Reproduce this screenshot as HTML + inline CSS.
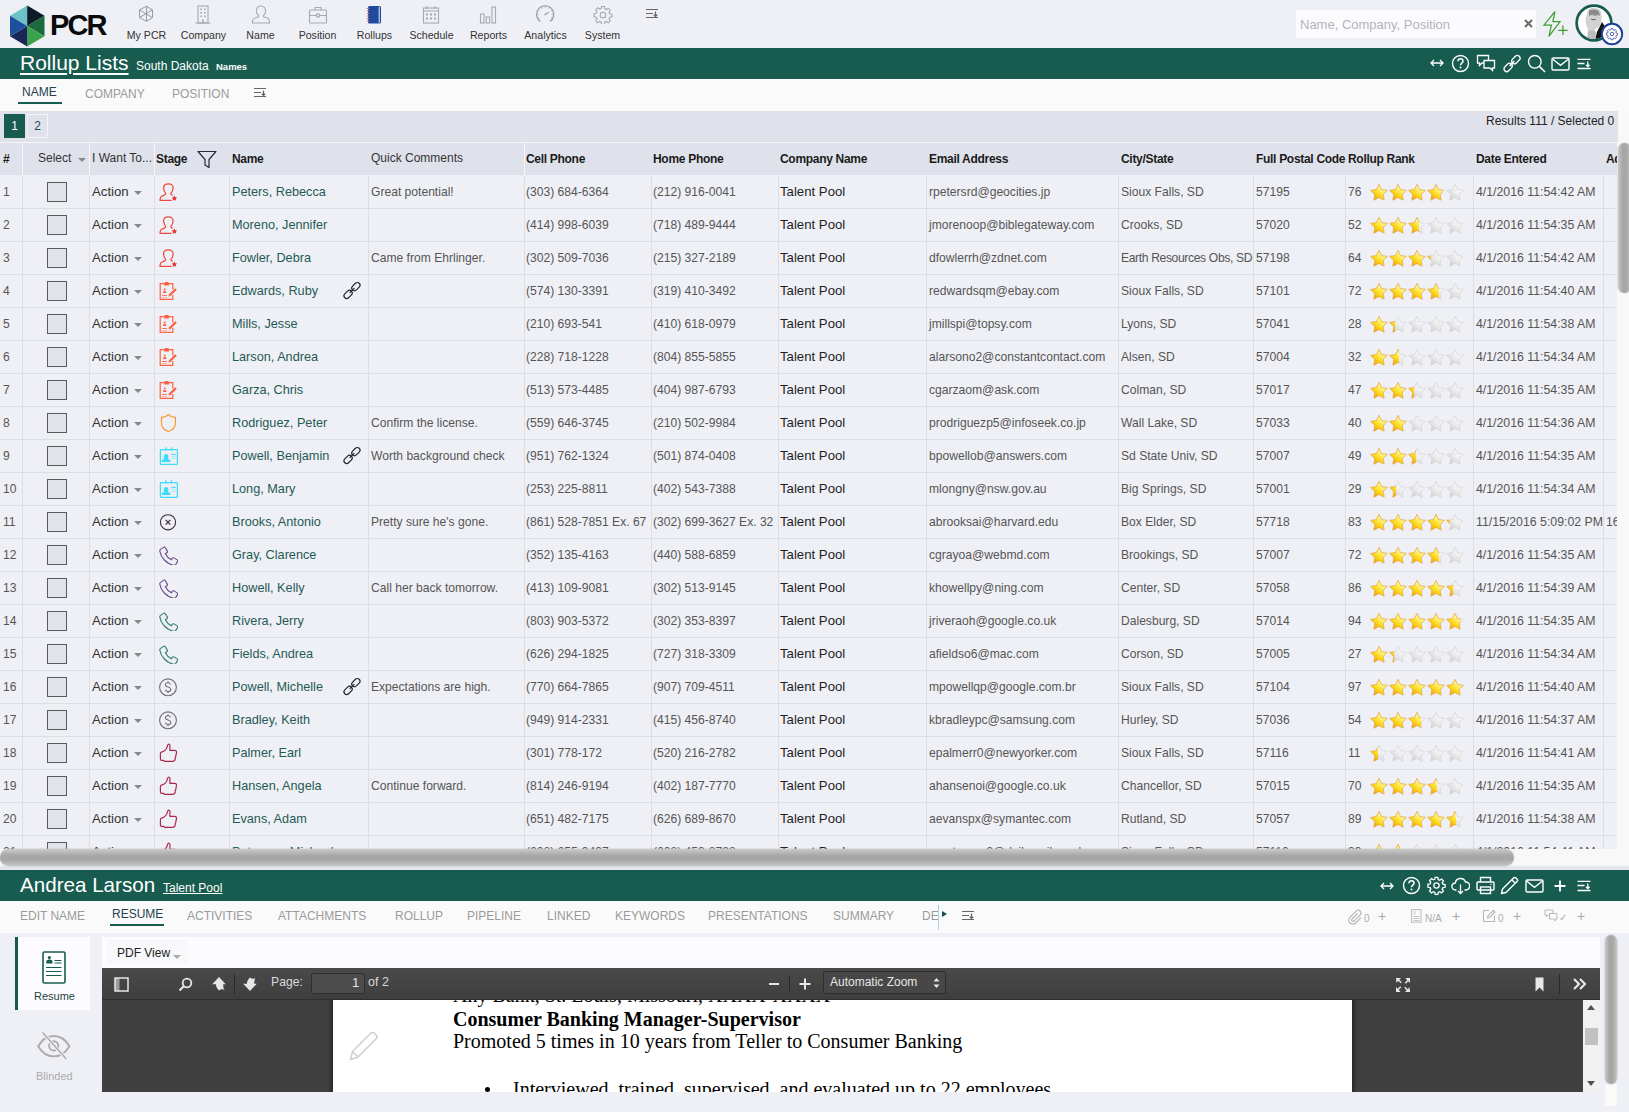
<!DOCTYPE html>
<html><head><meta charset="utf-8"><title>Rollup Lists</title>
<style>
*{box-sizing:border-box}
html,body{margin:0;padding:0}
body{width:1629px;height:1112px;overflow:hidden;position:relative;background:#eff0f5;font-family:"Liberation Sans",sans-serif;color:#333}
.abs{position:absolute}
svg{display:block}
#topnav{left:0;top:0;width:1629px;height:48px;background:#eff0f5}
.nav{position:absolute;top:0;width:57px;height:48px;text-align:center}
.nav span{position:absolute;left:-10px;right:-10px;top:29px;font-size:10.6px;color:#333;text-align:center}
#hdr1{left:0;top:48px;width:1629px;height:31px;background:#185c4f}
#tabs1{left:0;top:79px;width:1629px;height:32px;background:#fafafa}
.tab{position:absolute;font-size:12px;color:#9a9a9a;white-space:nowrap}
.tab.act{color:#1e4250}
#pager{left:0;top:111px;width:1618px;height:31px;background:#e0e2eb}
#grid{left:0;top:142px;width:1617px;height:707px;overflow:hidden;background:#eff0f5}
.hrow{position:absolute;left:0;top:1px;width:1617px;height:32px;background:#e0e2eb}
.hl{position:absolute;top:0;width:1px;height:32px;background:#f7f7fa}
.hc{position:absolute;top:9px;font-size:12px;font-weight:bold;color:#1b1b1b;white-space:nowrap;letter-spacing:-.3px}
.row{position:absolute;left:0;width:1617px;height:33px;border-bottom:1px solid #dcdee6}
.vl{position:absolute;top:34px;width:1px;height:673px;background:#dcdee6}
.c{position:absolute;top:9px;font-size:12.1px;color:#555;white-space:nowrap}
.c.nm{color:#1f5a55;font-size:12.7px;top:9px}
.c.tp{color:#1e1e1e;font-size:13.2px;top:8px}
.cb{position:absolute;left:47px;top:6px;width:20px;height:20px;border:1.5px solid #5a5a5a;background:#e1e3eb}
.act-dd{position:absolute;left:92px;top:8px;font-size:13.2px;color:#333}
.tri{position:absolute;width:0;height:0;border-left:4px solid transparent;border-right:4px solid transparent;border-top:4px solid #888}
.stg{position:absolute;left:158px;top:6px}
.lnk{position:absolute;left:342px;top:6px}
.stars{position:absolute;left:1370px;top:7px}
#hscroll{left:0;top:849px;width:1629px;height:21px;background:#eceef3}
#hdr2{left:0;top:870px;width:1629px;height:31px;background:#185c4f}
#tabs2{left:0;top:901px;width:1629px;height:32px;background:#fafafa}
#content{left:0;top:933px;width:1629px;height:179px;background:#eff0f5}
</style></head><body>
<svg width="0" height="0" style="position:absolute"><defs>
<linearGradient id="gF" x1="0.9" y1="0.2" x2="0.3" y2="1"><stop offset="0" stop-color="#fff8b8"/><stop offset=".28" stop-color="#fff27a"/><stop offset=".62" stop-color="#fbd816"/><stop offset="1" stop-color="#f4a010"/></linearGradient>
<linearGradient id="gE" x1="1" y1="0.1" x2="0.2" y2="1"><stop offset="0" stop-color="#fdfdfd"/><stop offset=".5" stop-color="#eeeeee"/><stop offset="1" stop-color="#cdcdcd"/></linearGradient>
</defs></svg>

<div id="topnav" class="abs">
<svg class="abs" style="left:9px;top:4.5px" width="38" height="42" viewBox="0 0 38 42">
<polygon points="18.2,21 1,10.8 18.2,0.5" fill="#6cc3c6"/>
<polygon points="18.2,21 18.2,0.5 35.5,10.8" fill="#0c1b27"/>
<polygon points="18.2,21 35.5,10.8 35.5,31.2" fill="#1c6a3c"/>
<polygon points="18.2,21 35.5,31.2 18.2,41.5" fill="#3ba24e"/>
<polygon points="18.2,21 18.2,41.5 1,31.2" fill="#1a2558"/>
<polygon points="18.2,21 1,31.2 1,10.8" fill="#1e4f9c"/>
</svg>
<div class="abs" style="left:50px;top:8.5px;font-size:29px;font-weight:bold;color:#0a0a0a;letter-spacing:-1.9px">PCR</div>
<div class="nav" style="left:118px"><div class="abs" style="left:19px;top:5px"><svg width="18" height="18" viewBox="0 0 18 18"><g fill="none" stroke="#9a9aa2" stroke-width="1"><polygon points="9.5,1.2 15.5,4.900 15.5,12.600 9.5,16.300 2.500,12.600 2.500,4.900"/><path d="M9.5 1.2v15.1M2.5 4.9l13 7.7M15.5 4.9l-13 7.7"/></g></svg></div><span>My PCR</span></div>
<div class="nav" style="left:175px"><div class="abs" style="left:19px;top:5px"><svg width="18" height="19" viewBox="0 0 18 19"><g fill="none" stroke="#a8a8b0" stroke-width="1.1"><rect x="4" y="1" width="10" height="17"/><path d="M1.5 18h15"/></g><g fill="#a8a8b0"><rect x="6.3" y="3.5" width="1.6" height="1.6"/><rect x="10.1" y="3.5" width="1.6" height="1.6"/><rect x="6.3" y="7" width="1.6" height="1.6"/><rect x="10.1" y="7" width="1.6" height="1.6"/><rect x="6.3" y="10.5" width="1.6" height="1.6"/><rect x="10.1" y="10.5" width="1.6" height="1.6"/><rect x="8.2" y="14.5" width="1.6" height="3.5"/></g></svg></div><span>Company</span></div>
<div class="nav" style="left:232px"><div class="abs" style="left:19px;top:5px"><svg width="20" height="19" viewBox="0 0 20 19"><path d="M10 1c-2.7 0-4.6 2.1-4.6 5.1 0 1.9.9 3.6 2.2 4.5v1.2c-3 .6-5.6 1.8-6 3.6-.1.6-.1 1.6-.1 2.6h17c0-1 0-2-.1-2.6-.4-1.8-3-3-6-3.6v-1.2c1.3-.9 2.2-2.6 2.2-4.5C14.6 3.1 12.7 1 10 1z" fill="none" stroke="#a8a8b0" stroke-width="1.1"/></svg></div><span>Name</span></div>
<div class="nav" style="left:289px"><div class="abs" style="left:19px;top:5px"><svg width="20" height="19" viewBox="0 0 20 19"><g fill="none" stroke="#a8a8b0" stroke-width="1.1"><rect x="1.5" y="5" width="17" height="13" rx="1"/><path d="M7 5V2.5h6V5M1.5 10.5h17"/><rect x="8.6" y="9" width="2.8" height="3" fill="#eff0f5"/></g></svg></div><span>Position</span></div>
<div class="nav" style="left:346px"><div class="abs" style="left:19px;top:5px"><svg width="18" height="19" viewBox="0 0 18 19"><rect x="3" y="1" width="13" height="17.5" rx="1.5" fill="#1f4b9c"/><path d="M14.2 1.8v16" stroke="#e9eef8" stroke-width="1"/><g stroke="#e0707a" stroke-width="1.2"><path d="M1.8 3.5h2.4M1.8 6h2.4M1.8 8.5h2.4M1.8 11h2.4M1.8 13.5h2.4M1.8 16h2.4"/></g></svg></div><span>Rollups</span></div>
<div class="nav" style="left:403px"><div class="abs" style="left:19px;top:5px"><svg width="18" height="19" viewBox="0 0 18 19"><g fill="none" stroke="#a8a8b0" stroke-width="1.1"><rect x="1.5" y="3" width="15" height="15"/><path d="M5 1v3M13 1v3M1.5 6h15"/></g><g fill="#a8a8b0"><rect x="4" y="8.5" width="2" height="2"/><rect x="8" y="8.5" width="2" height="2"/><rect x="12" y="8.5" width="2" height="2"/><rect x="4" y="12.5" width="2" height="2"/><rect x="8" y="12.5" width="2" height="2"/><rect x="12" y="12.5" width="2" height="2"/></g></svg></div><span>Schedule</span></div>
<div class="nav" style="left:460px"><div class="abs" style="left:19px;top:5px"><svg width="18" height="19" viewBox="0 0 18 19"><g fill="none" stroke="#a8a8b0" stroke-width="1.1"><rect x="1.5" y="9" width="3.5" height="9"/><rect x="7.2" y="12" width="3.5" height="6"/><rect x="13" y="2" width="3.5" height="16"/></g></svg></div><span>Reports</span></div>
<div class="nav" style="left:517px"><div class="abs" style="left:19px;top:5px"><svg width="20" height="19" viewBox="0 0 20 19"><g fill="none" stroke="#9a9aa2"><path d="M4.27 16.44A8.6 8.6 0 1 1 14.13 16.44" stroke-width="1.1"/><path d="M3.48 12.70L2.36 13.35M2.60 9.40L1.30 9.40M3.48 6.10L2.36 5.45M5.90 3.68L5.25 2.56M9.20 2.80L9.20 1.50M12.50 3.68L13.15 2.56M14.92 6.10L16.04 5.45M15.80 9.40L17.10 9.40M14.92 12.70L16.04 13.35" stroke-width=".8"/><path d="M8.4 9.9L12.9 7.3" stroke-width="1.2"/></g></svg></div><span>Analytics</span></div>
<div class="nav" style="left:574px"><div class="abs" style="left:19px;top:5px"><svg width="20" height="19" viewBox="0 0 20 19"><path d="M8.6 1.5h2.8l.4 2.3 1.5.7 2-1.3 2 2-1.3 2 .7 1.5 2.3.4v2.8l-2.3.4-.7 1.5 1.3 2-2 2-2-1.3-1.5.7-.4 2.3H8.6l-.4-2.3-1.5-.7-2 1.3-2-2 1.3-2-.7-1.5-2.3-.4V8.6l2.3-.4.7-1.5-1.3-2 2-2 2 1.3 1.5-.7z" fill="none" stroke="#a8a8b0" stroke-width="1.1"/><circle cx="10" cy="10" r="2.8" fill="none" stroke="#a8a8b0" stroke-width="1.1"/></svg></div><span>System</span></div>
<svg class="abs" style="left:645px;top:8px" width="14" height="12" viewBox="0 0 14 12"><g stroke="#666" stroke-width="1.2"><path d="M1 1.5h12M1 5.5h7M1 9.5h12M10.5 3.5v5M8.8 6.8l1.7 1.7 1.7-1.7"/></g></svg>
<div class="abs" style="left:1296px;top:10px;width:240px;height:28px;background:#fbfbfd;border-radius:3px"></div>
<div class="abs" style="left:1300px;top:17px;font-size:13px;color:#b3b3bb">Name, Company, Position</div>
<svg class="abs" style="left:1524px;top:19px" width="9" height="9" viewBox="0 0 9 9"><path d="M1 1l7 7M8 1L1 8" stroke="#6a6a6a" stroke-width="2"/></svg>
<svg class="abs" style="left:1536px;top:0px" width="36" height="40" viewBox="0 0 36 40"><path d="M18.9 11.7L8 25.1h7.4L12.9 36.3 24 21.7h-7.1z" fill="none" stroke="#3f9f36" stroke-width="1.25" stroke-linejoin="miter"/><path d="M22.3 30.3h9.4M26.9 25.4v9.5" stroke="#3f9f36" stroke-width="1.3"/></svg>
<svg class="abs" style="left:1573px;top:2px" width="54" height="44" viewBox="0 0 54 44">
<defs><clipPath id="av"><circle cx="21" cy="21" r="16"/></clipPath></defs>
<circle cx="21" cy="21" r="16.8" fill="#fff" stroke="#185c4f" stroke-width="3.8"/>
<g clip-path="url(#av)"><rect x="0" y="0" width="42" height="42" fill="#ffffff"/>
<path d="M15 8c3-3 9-3 12 0 2 3 2 9 1 13-1 3-3 5-6 6l-1 13h-7l1-13c-2-3-3-8-2-12z" fill="#d2d2d2"/>
<path d="M16 9c2-2 8-2 10 1l1 4c-3-2-8-2-11 0z" fill="#8a8a8a"/>
<path d="M20 13h4M18 17c1 1 4 1 5 0" stroke="#7a7a7a" stroke-width="1"/>
<path d="M29 20l4 6 3 16H21l3-12z" fill="#141414"/>
<path d="M15 30c2-2 6-2 8 0l-1 12h-8z" fill="#bdbdbd"/></g>
<circle cx="39" cy="32" r="10.2" fill="#fff" stroke="#1b3f93" stroke-width="1.9"/>
<g transform="translate(32.5,25.5) scale(1.08)"><path d="M5.2 1h1.6l.3 1.3.9.4 1.1-.7 1.1 1.1-.7 1.1.4.9 1.3.3v1.6l-1.3.3-.4.9.7 1.1-1.1 1.1-1.1-.7-.9.4-.3 1.3H5.2l-.3-1.3-.9-.4-1.1.7-1.1-1.1.7-1.1-.4-.9L.8 6.8V5.2l1.3-.3.4-.9-.7-1.1 1.1-1.1 1.1.7.9-.4z" fill="none" stroke="#4a5aa8" stroke-width=".9"/><circle cx="6" cy="6" r="1.6" fill="none" stroke="#4a5aa8" stroke-width=".9"/></g>
</svg>
</div>
<div id="hdr1" class="abs">
<div class="abs" style="left:20px;top:3px;font-size:21px;color:#fff;text-decoration:underline;text-decoration-thickness:1.5px;text-underline-offset:3px">Rollup Lists</div>
<div class="abs" style="left:136px;top:11px;font-size:12px;color:#fff">South Dakota</div>
<div class="abs" style="left:216px;top:13px;font-size:9.5px;font-weight:bold;color:#fff">Names</div>
<div class="abs" style="left:1430px;top:9px"><svg width="14" height="12" viewBox="0 0 14 12"><path d="M1 6h12M4 3L1 6l3 3M10 3l3 3-3 3" fill="none" stroke="#fff" stroke-width="1.3"/></svg></div>
<div class="abs" style="left:1451px;top:6px"><svg width="19" height="19" viewBox="0 0 19 19"><circle cx="9.5" cy="9.5" r="8" fill="none" stroke="#fff" stroke-width="1.4"/><path d="M7 7.3c0-1.5 1.1-2.5 2.5-2.5S12 5.8 12 7.2c0 1.8-2.5 2-2.5 4" fill="none" stroke="#fff" stroke-width="1.5"/><circle cx="9.5" cy="13.6" r="1" fill="#fff"/></svg></div>
<div class="abs" style="left:1476px;top:6px"><svg width="20" height="19" viewBox="0 0 20 19"><path d="M1.5 1.5h11v7.5H6l-2.5 2.5V9H1.5z" fill="none" stroke="#fff" stroke-width="1.3"/><path d="M8 6.5h10.5V14h-2v2.5L14 14H8z" fill="#185c4f" stroke="#fff" stroke-width="1.3"/></svg></div>
<div class="abs" style="left:1502px;top:6px"><svg width="20" height="20" viewBox="0 0 20 20"><g fill="none" stroke="#fff" stroke-width="1.35"><rect x="11.2" y="0.9" width="5.4" height="9.4" rx="2.7" transform="rotate(45 13.9 5.6)"/><rect x="3.4" y="8.7" width="5.4" height="9.4" rx="2.7" transform="rotate(45 6.1 13.4)"/><path d="M7.6 11.9l4.8-4.8"/></g></svg></div>
<div class="abs" style="left:1527px;top:6px"><svg width="19" height="19" viewBox="0 0 19 19"><circle cx="7.8" cy="7.8" r="6.3" fill="none" stroke="#fff" stroke-width="1.4"/><path d="M12.4 12.4l5.6 5.6" stroke="#fff" stroke-width="1.5"/></svg></div>
<div class="abs" style="left:1551px;top:9px"><svg width="19" height="14" viewBox="0 0 19 14"><rect x="1" y="1" width="17" height="12" rx="1.2" fill="none" stroke="#fff" stroke-width="1.4"/><path d="M1.5 2l8 6.3 8-6.3" fill="none" stroke="#fff" stroke-width="1.4"/></svg></div>
<div class="abs" style="left:1577px;top:10px"><svg width="14" height="12" viewBox="0 0 14 12"><g stroke="#fff" stroke-width="1.3"><path d="M0.5 1.3h13M0.5 5.5h7M0.5 10.5h13M10.8 3.5v5M9 6.8l1.8 1.8 1.8-1.8"/></g></svg></div>
</div>
<div id="tabs1" class="abs">
<div class="tab act" style="left:22px;top:6px">NAME</div>
<div class="abs" style="left:18px;top:23px;width:44px;height:2px;background:#185c4f"></div>
<div class="tab" style="left:85px;top:8px">COMPANY</div>
<div class="tab" style="left:172px;top:8px">POSITION</div>
<svg class="abs" style="left:253px;top:8px" width="14" height="12" viewBox="0 0 14 12"><g stroke="#666" stroke-width="1.2"><path d="M1 1.5h12M1 5.5h7M1 9.5h12M10.5 3.5v5M8.8 6.8l1.7 1.7 1.7-1.7"/></g></svg>
</div>
<div class="abs" style="left:1618px;top:111px;width:11px;height:31px;background:#f8f8f8"></div>
<div id="pager" class="abs">
<div class="abs" style="left:4px;top:3px;width:21px;height:24px;background:#185c4f;color:#fff;font-size:12px;text-align:center;line-height:24px">1</div>
<div class="abs" style="left:27px;top:3px;width:21px;height:24px;border:1px solid #f4f5f8;color:#1e4a50;font-size:12px;text-align:center;line-height:22px">2</div>
<div class="abs" style="left:1486px;top:3px;font-size:12px;color:#222">Results 111 / Selected 0</div>
</div>
<div id="grid" class="abs">
<div class="abs" style="left:0;top:0;width:1617px;height:1px;background:#f3f4f8"></div>
<div class="hrow">
<div class="hl" style="left:22px"></div>
<div class="hl" style="left:89px"></div>
<div class="hl" style="left:154px"></div>
<div class="hl" style="left:524px"></div>
<div class="hc" style="left:3px;">#</div>
<div class="hc" style="left:38px;font-weight:normal;color:#333;letter-spacing:0;top:8px;">Select</div>
<div class="hc" style="left:92px;font-weight:normal;color:#333;letter-spacing:0;top:8px;">I Want To...</div>
<div class="hc" style="left:156px;">Stage</div>
<div class="hc" style="left:232px;">Name</div>
<div class="hc" style="left:371px;font-weight:normal;color:#333;letter-spacing:0;top:8px;">Quick Comments</div>
<div class="hc" style="left:526px;">Cell Phone</div>
<div class="hc" style="left:653px;">Home Phone</div>
<div class="hc" style="left:780px;">Company Name</div>
<div class="hc" style="left:929px;">Email Address</div>
<div class="hc" style="left:1121px;">City/State</div>
<div class="hc" style="left:1256px;">Full Postal Code</div>
<div class="hc" style="left:1348px;">Rollup Rank</div>
<div class="hc" style="left:1476px;">Date Entered</div>
<div class="hc" style="left:1606px;">Address</div>
<div class="tri" style="left:78px;top:15px"></div>
<svg class="abs" style="left:197px;top:7px" width="20" height="19" viewBox="0 0 20 19"><path d="M1 1.5h18l-7 8v8l-4-2.5V9.5z" fill="none" stroke="#2a2a3a" stroke-width="1.2" stroke-linejoin="round"/></svg>
</div>
<div class="vl" style="left:22px"></div>
<div class="vl" style="left:89px"></div>
<div class="vl" style="left:154px"></div>
<div class="vl" style="left:229px"></div>
<div class="vl" style="left:368px"></div>
<div class="vl" style="left:524px"></div>
<div class="vl" style="left:651px"></div>
<div class="vl" style="left:778px"></div>
<div class="vl" style="left:926px"></div>
<div class="vl" style="left:1118px"></div>
<div class="vl" style="left:1253px"></div>
<div class="vl" style="left:1345px"></div>
<div class="vl" style="left:1473px"></div>
<div class="vl" style="left:1603px"></div>
<div class="row" style="top:34px">
<div class="c" style="left:3px">1</div>
<div class="cb"></div>
<div class="act-dd">Action</div><div class="tri" style="left:134px;top:15px"></div>
<div class="stg"><svg width="20" height="20" viewBox="0 0 20 20"><path d="M8 11.6C6.3 10 5.6 8 5.6 5.8 5.6 3.2 7.5 1.9 10.4 1.9s4.7 1.3 4.7 3.9c0 2.2-.7 4.2-2.4 5.8l1.8 1.9M8 11.6c-.5.9-1.5 1.4-3.5 2.2C2.7 14.6 2.1 15.5 2.1 17v1.4h11.4" fill="none" stroke="#ef473b" stroke-width="1.25"/><path d="M16.4 13.5l.85 1.8 1.95.2-1.45 1.3.4 1.95-1.75-1-1.75 1 .4-1.95-1.45-1.3 1.95-.2z" fill="#ee2b2b"/></svg></div>
<div class="c nm" style="left:232px">Peters, Rebecca</div>
<div class="c" style="left:371px">Great potential!</div>
<div class="c" style="left:526px">(303) 684-6364</div>
<div class="c" style="left:653px">(212) 916-0041</div>
<div class="c tp" style="left:780px">Talent Pool</div>
<div class="c" style="left:929px">rpetersrd@geocities.jp</div>
<div class="c" style="left:1121px;">Sioux Falls, SD</div>
<div class="c" style="left:1256px">57195</div>
<div class="c" style="left:1348px">76</div>
<svg class="stars" width="95" height="19" viewBox="0 0 95 19"><polygon transform="translate(0,0)" points="9.00,1.40 11.53,6.62 17.27,7.41 13.09,11.43 14.11,17.14 9.00,14.40 3.89,17.14 4.91,11.43 0.73,7.41 6.47,6.62" fill="url(#gE)" stroke="#d2d2d2" stroke-width=".7" stroke-linejoin="round"/><polygon transform="translate(19,0)" points="9.00,1.40 11.53,6.62 17.27,7.41 13.09,11.43 14.11,17.14 9.00,14.40 3.89,17.14 4.91,11.43 0.73,7.41 6.47,6.62" fill="url(#gE)" stroke="#d2d2d2" stroke-width=".7" stroke-linejoin="round"/><polygon transform="translate(38,0)" points="9.00,1.40 11.53,6.62 17.27,7.41 13.09,11.43 14.11,17.14 9.00,14.40 3.89,17.14 4.91,11.43 0.73,7.41 6.47,6.62" fill="url(#gE)" stroke="#d2d2d2" stroke-width=".7" stroke-linejoin="round"/><polygon transform="translate(57,0)" points="9.00,1.40 11.53,6.62 17.27,7.41 13.09,11.43 14.11,17.14 9.00,14.40 3.89,17.14 4.91,11.43 0.73,7.41 6.47,6.62" fill="url(#gE)" stroke="#d2d2d2" stroke-width=".7" stroke-linejoin="round"/><polygon transform="translate(76,0)" points="9.00,1.40 11.53,6.62 17.27,7.41 13.09,11.43 14.11,17.14 9.00,14.40 3.89,17.14 4.91,11.43 0.73,7.41 6.47,6.62" fill="url(#gE)" stroke="#d2d2d2" stroke-width=".7" stroke-linejoin="round"/><g clip-path="url(#c0)"><polygon transform="translate(0,0)" points="9.00,1.40 11.53,6.62 17.27,7.41 13.09,11.43 14.11,17.14 9.00,14.40 3.89,17.14 4.91,11.43 0.73,7.41 6.47,6.62" fill="url(#gF)" stroke="#eca53a" stroke-width=".7" stroke-linejoin="round"/><polygon transform="translate(19,0)" points="9.00,1.40 11.53,6.62 17.27,7.41 13.09,11.43 14.11,17.14 9.00,14.40 3.89,17.14 4.91,11.43 0.73,7.41 6.47,6.62" fill="url(#gF)" stroke="#eca53a" stroke-width=".7" stroke-linejoin="round"/><polygon transform="translate(38,0)" points="9.00,1.40 11.53,6.62 17.27,7.41 13.09,11.43 14.11,17.14 9.00,14.40 3.89,17.14 4.91,11.43 0.73,7.41 6.47,6.62" fill="url(#gF)" stroke="#eca53a" stroke-width=".7" stroke-linejoin="round"/><polygon transform="translate(57,0)" points="9.00,1.40 11.53,6.62 17.27,7.41 13.09,11.43 14.11,17.14 9.00,14.40 3.89,17.14 4.91,11.43 0.73,7.41 6.47,6.62" fill="url(#gF)" stroke="#eca53a" stroke-width=".7" stroke-linejoin="round"/><polygon transform="translate(76,0)" points="9.00,1.40 11.53,6.62 17.27,7.41 13.09,11.43 14.11,17.14 9.00,14.40 3.89,17.14 4.91,11.43 0.73,7.41 6.47,6.62" fill="url(#gF)" stroke="#eca53a" stroke-width=".7" stroke-linejoin="round"/></g><clipPath id="c0"><rect x="0" y="0" width="73.1" height="19"/></clipPath></svg>
<div class="c" style="left:1476px;font-size:12.3px">4/1/2016 11:54:42 AM</div>
</div>
<div class="row" style="top:67px">
<div class="c" style="left:3px">2</div>
<div class="cb"></div>
<div class="act-dd">Action</div><div class="tri" style="left:134px;top:15px"></div>
<div class="stg"><svg width="20" height="20" viewBox="0 0 20 20"><path d="M8 11.6C6.3 10 5.6 8 5.6 5.8 5.6 3.2 7.5 1.9 10.4 1.9s4.7 1.3 4.7 3.9c0 2.2-.7 4.2-2.4 5.8l1.8 1.9M8 11.6c-.5.9-1.5 1.4-3.5 2.2C2.7 14.6 2.1 15.5 2.1 17v1.4h11.4" fill="none" stroke="#ef473b" stroke-width="1.25"/><path d="M16.4 13.5l.85 1.8 1.95.2-1.45 1.3.4 1.95-1.75-1-1.75 1 .4-1.95-1.45-1.3 1.95-.2z" fill="#ee2b2b"/></svg></div>
<div class="c nm" style="left:232px">Moreno, Jennifer</div>
<div class="c" style="left:526px">(414) 998-6039</div>
<div class="c" style="left:653px">(718) 489-9444</div>
<div class="c tp" style="left:780px">Talent Pool</div>
<div class="c" style="left:929px">jmorenoop@biblegateway.com</div>
<div class="c" style="left:1121px;">Crooks, SD</div>
<div class="c" style="left:1256px">57020</div>
<div class="c" style="left:1348px">52</div>
<svg class="stars" width="95" height="19" viewBox="0 0 95 19"><polygon transform="translate(0,0)" points="9.00,1.40 11.53,6.62 17.27,7.41 13.09,11.43 14.11,17.14 9.00,14.40 3.89,17.14 4.91,11.43 0.73,7.41 6.47,6.62" fill="url(#gE)" stroke="#d2d2d2" stroke-width=".7" stroke-linejoin="round"/><polygon transform="translate(19,0)" points="9.00,1.40 11.53,6.62 17.27,7.41 13.09,11.43 14.11,17.14 9.00,14.40 3.89,17.14 4.91,11.43 0.73,7.41 6.47,6.62" fill="url(#gE)" stroke="#d2d2d2" stroke-width=".7" stroke-linejoin="round"/><polygon transform="translate(38,0)" points="9.00,1.40 11.53,6.62 17.27,7.41 13.09,11.43 14.11,17.14 9.00,14.40 3.89,17.14 4.91,11.43 0.73,7.41 6.47,6.62" fill="url(#gE)" stroke="#d2d2d2" stroke-width=".7" stroke-linejoin="round"/><polygon transform="translate(57,0)" points="9.00,1.40 11.53,6.62 17.27,7.41 13.09,11.43 14.11,17.14 9.00,14.40 3.89,17.14 4.91,11.43 0.73,7.41 6.47,6.62" fill="url(#gE)" stroke="#d2d2d2" stroke-width=".7" stroke-linejoin="round"/><polygon transform="translate(76,0)" points="9.00,1.40 11.53,6.62 17.27,7.41 13.09,11.43 14.11,17.14 9.00,14.40 3.89,17.14 4.91,11.43 0.73,7.41 6.47,6.62" fill="url(#gE)" stroke="#d2d2d2" stroke-width=".7" stroke-linejoin="round"/><g clip-path="url(#c1)"><polygon transform="translate(0,0)" points="9.00,1.40 11.53,6.62 17.27,7.41 13.09,11.43 14.11,17.14 9.00,14.40 3.89,17.14 4.91,11.43 0.73,7.41 6.47,6.62" fill="url(#gF)" stroke="#eca53a" stroke-width=".7" stroke-linejoin="round"/><polygon transform="translate(19,0)" points="9.00,1.40 11.53,6.62 17.27,7.41 13.09,11.43 14.11,17.14 9.00,14.40 3.89,17.14 4.91,11.43 0.73,7.41 6.47,6.62" fill="url(#gF)" stroke="#eca53a" stroke-width=".7" stroke-linejoin="round"/><polygon transform="translate(38,0)" points="9.00,1.40 11.53,6.62 17.27,7.41 13.09,11.43 14.11,17.14 9.00,14.40 3.89,17.14 4.91,11.43 0.73,7.41 6.47,6.62" fill="url(#gF)" stroke="#eca53a" stroke-width=".7" stroke-linejoin="round"/><polygon transform="translate(57,0)" points="9.00,1.40 11.53,6.62 17.27,7.41 13.09,11.43 14.11,17.14 9.00,14.40 3.89,17.14 4.91,11.43 0.73,7.41 6.47,6.62" fill="url(#gF)" stroke="#eca53a" stroke-width=".7" stroke-linejoin="round"/><polygon transform="translate(76,0)" points="9.00,1.40 11.53,6.62 17.27,7.41 13.09,11.43 14.11,17.14 9.00,14.40 3.89,17.14 4.91,11.43 0.73,7.41 6.47,6.62" fill="url(#gF)" stroke="#eca53a" stroke-width=".7" stroke-linejoin="round"/></g><clipPath id="c1"><rect x="0" y="0" width="49.1" height="19"/></clipPath></svg>
<div class="c" style="left:1476px;font-size:12.3px">4/1/2016 11:54:35 AM</div>
</div>
<div class="row" style="top:100px">
<div class="c" style="left:3px">3</div>
<div class="cb"></div>
<div class="act-dd">Action</div><div class="tri" style="left:134px;top:15px"></div>
<div class="stg"><svg width="20" height="20" viewBox="0 0 20 20"><path d="M8 11.6C6.3 10 5.6 8 5.6 5.8 5.6 3.2 7.5 1.9 10.4 1.9s4.7 1.3 4.7 3.9c0 2.2-.7 4.2-2.4 5.8l1.8 1.9M8 11.6c-.5.9-1.5 1.4-3.5 2.2C2.7 14.6 2.1 15.5 2.1 17v1.4h11.4" fill="none" stroke="#ef473b" stroke-width="1.25"/><path d="M16.4 13.5l.85 1.8 1.95.2-1.45 1.3.4 1.95-1.75-1-1.75 1 .4-1.95-1.45-1.3 1.95-.2z" fill="#ee2b2b"/></svg></div>
<div class="c nm" style="left:232px">Fowler, Debra</div>
<div class="c" style="left:371px">Came from Ehrlinger.</div>
<div class="c" style="left:526px">(302) 509-7036</div>
<div class="c" style="left:653px">(215) 327-2189</div>
<div class="c tp" style="left:780px">Talent Pool</div>
<div class="c" style="left:929px">dfowlerrh@zdnet.com</div>
<div class="c" style="left:1121px;letter-spacing:-.35px">Earth Resources Obs, SD</div>
<div class="c" style="left:1256px">57198</div>
<div class="c" style="left:1348px">64</div>
<svg class="stars" width="95" height="19" viewBox="0 0 95 19"><polygon transform="translate(0,0)" points="9.00,1.40 11.53,6.62 17.27,7.41 13.09,11.43 14.11,17.14 9.00,14.40 3.89,17.14 4.91,11.43 0.73,7.41 6.47,6.62" fill="url(#gE)" stroke="#d2d2d2" stroke-width=".7" stroke-linejoin="round"/><polygon transform="translate(19,0)" points="9.00,1.40 11.53,6.62 17.27,7.41 13.09,11.43 14.11,17.14 9.00,14.40 3.89,17.14 4.91,11.43 0.73,7.41 6.47,6.62" fill="url(#gE)" stroke="#d2d2d2" stroke-width=".7" stroke-linejoin="round"/><polygon transform="translate(38,0)" points="9.00,1.40 11.53,6.62 17.27,7.41 13.09,11.43 14.11,17.14 9.00,14.40 3.89,17.14 4.91,11.43 0.73,7.41 6.47,6.62" fill="url(#gE)" stroke="#d2d2d2" stroke-width=".7" stroke-linejoin="round"/><polygon transform="translate(57,0)" points="9.00,1.40 11.53,6.62 17.27,7.41 13.09,11.43 14.11,17.14 9.00,14.40 3.89,17.14 4.91,11.43 0.73,7.41 6.47,6.62" fill="url(#gE)" stroke="#d2d2d2" stroke-width=".7" stroke-linejoin="round"/><polygon transform="translate(76,0)" points="9.00,1.40 11.53,6.62 17.27,7.41 13.09,11.43 14.11,17.14 9.00,14.40 3.89,17.14 4.91,11.43 0.73,7.41 6.47,6.62" fill="url(#gE)" stroke="#d2d2d2" stroke-width=".7" stroke-linejoin="round"/><g clip-path="url(#c2)"><polygon transform="translate(0,0)" points="9.00,1.40 11.53,6.62 17.27,7.41 13.09,11.43 14.11,17.14 9.00,14.40 3.89,17.14 4.91,11.43 0.73,7.41 6.47,6.62" fill="url(#gF)" stroke="#eca53a" stroke-width=".7" stroke-linejoin="round"/><polygon transform="translate(19,0)" points="9.00,1.40 11.53,6.62 17.27,7.41 13.09,11.43 14.11,17.14 9.00,14.40 3.89,17.14 4.91,11.43 0.73,7.41 6.47,6.62" fill="url(#gF)" stroke="#eca53a" stroke-width=".7" stroke-linejoin="round"/><polygon transform="translate(38,0)" points="9.00,1.40 11.53,6.62 17.27,7.41 13.09,11.43 14.11,17.14 9.00,14.40 3.89,17.14 4.91,11.43 0.73,7.41 6.47,6.62" fill="url(#gF)" stroke="#eca53a" stroke-width=".7" stroke-linejoin="round"/><polygon transform="translate(57,0)" points="9.00,1.40 11.53,6.62 17.27,7.41 13.09,11.43 14.11,17.14 9.00,14.40 3.89,17.14 4.91,11.43 0.73,7.41 6.47,6.62" fill="url(#gF)" stroke="#eca53a" stroke-width=".7" stroke-linejoin="round"/><polygon transform="translate(76,0)" points="9.00,1.40 11.53,6.62 17.27,7.41 13.09,11.43 14.11,17.14 9.00,14.40 3.89,17.14 4.91,11.43 0.73,7.41 6.47,6.62" fill="url(#gF)" stroke="#eca53a" stroke-width=".7" stroke-linejoin="round"/></g><clipPath id="c2"><rect x="0" y="0" width="61.1" height="19"/></clipPath></svg>
<div class="c" style="left:1476px;font-size:12.3px">4/1/2016 11:54:42 AM</div>
</div>
<div class="row" style="top:133px">
<div class="c" style="left:3px">4</div>
<div class="cb"></div>
<div class="act-dd">Action</div><div class="tri" style="left:134px;top:15px"></div>
<div class="stg"><svg width="20" height="20" viewBox="0 0 20 20"><path d="M14.8 8.6V2.6H2.2v15.8h12.6v-4.4" fill="none" stroke="#ff6142" stroke-width="1.2"/><path d="M6.2 4.6V2.6c0-.9.7-1.6 1.6-1.6h1.6c.9 0 1.6.7 1.6 1.6v2z" fill="#ff6142"/><circle cx="6.7" cy="8.4" r="1" fill="#ff6142"/><path d="M5.1 11.9v-.8c0-.8.7-1.2 1.6-1.2s1.6.4 1.6 1.2v.8z" fill="#ff6142"/><path d="M4.1 14.5H9" stroke="#ff6142" stroke-width=".9"/><path d="M4.1 16.5H9" stroke="#ffa08a" stroke-width=".8"/><path d="M11.2 14.8l6.8-6.8" stroke="#ff6142" stroke-width="2.3"/><path d="M10.6 15.6l.5-1.5 1 1z" fill="#ff6142"/></svg></div>
<div class="c nm" style="left:232px">Edwards, Ruby</div>
<div class="lnk"><svg width="20" height="20" viewBox="0 0 20 20"><g fill="none" stroke="#23232e" stroke-width="1.15"><rect x="11.2" y="0.9" width="5.4" height="9.4" rx="2.7" transform="rotate(45 13.9 5.6)"/><rect x="3.4" y="8.7" width="5.4" height="9.4" rx="2.7" transform="rotate(45 6.1 13.4)"/><path d="M7.6 11.9l4.8-4.8"/></g></svg></div>
<div class="c" style="left:526px">(574) 130-3391</div>
<div class="c" style="left:653px">(319) 410-3492</div>
<div class="c tp" style="left:780px">Talent Pool</div>
<div class="c" style="left:929px">redwardsqm@ebay.com</div>
<div class="c" style="left:1121px;">Sioux Falls, SD</div>
<div class="c" style="left:1256px">57101</div>
<div class="c" style="left:1348px">72</div>
<svg class="stars" width="95" height="19" viewBox="0 0 95 19"><polygon transform="translate(0,0)" points="9.00,1.40 11.53,6.62 17.27,7.41 13.09,11.43 14.11,17.14 9.00,14.40 3.89,17.14 4.91,11.43 0.73,7.41 6.47,6.62" fill="url(#gE)" stroke="#d2d2d2" stroke-width=".7" stroke-linejoin="round"/><polygon transform="translate(19,0)" points="9.00,1.40 11.53,6.62 17.27,7.41 13.09,11.43 14.11,17.14 9.00,14.40 3.89,17.14 4.91,11.43 0.73,7.41 6.47,6.62" fill="url(#gE)" stroke="#d2d2d2" stroke-width=".7" stroke-linejoin="round"/><polygon transform="translate(38,0)" points="9.00,1.40 11.53,6.62 17.27,7.41 13.09,11.43 14.11,17.14 9.00,14.40 3.89,17.14 4.91,11.43 0.73,7.41 6.47,6.62" fill="url(#gE)" stroke="#d2d2d2" stroke-width=".7" stroke-linejoin="round"/><polygon transform="translate(57,0)" points="9.00,1.40 11.53,6.62 17.27,7.41 13.09,11.43 14.11,17.14 9.00,14.40 3.89,17.14 4.91,11.43 0.73,7.41 6.47,6.62" fill="url(#gE)" stroke="#d2d2d2" stroke-width=".7" stroke-linejoin="round"/><polygon transform="translate(76,0)" points="9.00,1.40 11.53,6.62 17.27,7.41 13.09,11.43 14.11,17.14 9.00,14.40 3.89,17.14 4.91,11.43 0.73,7.41 6.47,6.62" fill="url(#gE)" stroke="#d2d2d2" stroke-width=".7" stroke-linejoin="round"/><g clip-path="url(#c3)"><polygon transform="translate(0,0)" points="9.00,1.40 11.53,6.62 17.27,7.41 13.09,11.43 14.11,17.14 9.00,14.40 3.89,17.14 4.91,11.43 0.73,7.41 6.47,6.62" fill="url(#gF)" stroke="#eca53a" stroke-width=".7" stroke-linejoin="round"/><polygon transform="translate(19,0)" points="9.00,1.40 11.53,6.62 17.27,7.41 13.09,11.43 14.11,17.14 9.00,14.40 3.89,17.14 4.91,11.43 0.73,7.41 6.47,6.62" fill="url(#gF)" stroke="#eca53a" stroke-width=".7" stroke-linejoin="round"/><polygon transform="translate(38,0)" points="9.00,1.40 11.53,6.62 17.27,7.41 13.09,11.43 14.11,17.14 9.00,14.40 3.89,17.14 4.91,11.43 0.73,7.41 6.47,6.62" fill="url(#gF)" stroke="#eca53a" stroke-width=".7" stroke-linejoin="round"/><polygon transform="translate(57,0)" points="9.00,1.40 11.53,6.62 17.27,7.41 13.09,11.43 14.11,17.14 9.00,14.40 3.89,17.14 4.91,11.43 0.73,7.41 6.47,6.62" fill="url(#gF)" stroke="#eca53a" stroke-width=".7" stroke-linejoin="round"/><polygon transform="translate(76,0)" points="9.00,1.40 11.53,6.62 17.27,7.41 13.09,11.43 14.11,17.14 9.00,14.40 3.89,17.14 4.91,11.43 0.73,7.41 6.47,6.62" fill="url(#gF)" stroke="#eca53a" stroke-width=".7" stroke-linejoin="round"/></g><clipPath id="c3"><rect x="0" y="0" width="69.1" height="19"/></clipPath></svg>
<div class="c" style="left:1476px;font-size:12.3px">4/1/2016 11:54:40 AM</div>
</div>
<div class="row" style="top:166px">
<div class="c" style="left:3px">5</div>
<div class="cb"></div>
<div class="act-dd">Action</div><div class="tri" style="left:134px;top:15px"></div>
<div class="stg"><svg width="20" height="20" viewBox="0 0 20 20"><path d="M14.8 8.6V2.6H2.2v15.8h12.6v-4.4" fill="none" stroke="#ff6142" stroke-width="1.2"/><path d="M6.2 4.6V2.6c0-.9.7-1.6 1.6-1.6h1.6c.9 0 1.6.7 1.6 1.6v2z" fill="#ff6142"/><circle cx="6.7" cy="8.4" r="1" fill="#ff6142"/><path d="M5.1 11.9v-.8c0-.8.7-1.2 1.6-1.2s1.6.4 1.6 1.2v.8z" fill="#ff6142"/><path d="M4.1 14.5H9" stroke="#ff6142" stroke-width=".9"/><path d="M4.1 16.5H9" stroke="#ffa08a" stroke-width=".8"/><path d="M11.2 14.8l6.8-6.8" stroke="#ff6142" stroke-width="2.3"/><path d="M10.6 15.6l.5-1.5 1 1z" fill="#ff6142"/></svg></div>
<div class="c nm" style="left:232px">Mills, Jesse</div>
<div class="c" style="left:526px">(210) 693-541</div>
<div class="c" style="left:653px">(410) 618-0979</div>
<div class="c tp" style="left:780px">Talent Pool</div>
<div class="c" style="left:929px">jmillspi@topsy.com</div>
<div class="c" style="left:1121px;">Lyons, SD</div>
<div class="c" style="left:1256px">57041</div>
<div class="c" style="left:1348px">28</div>
<svg class="stars" width="95" height="19" viewBox="0 0 95 19"><polygon transform="translate(0,0)" points="9.00,1.40 11.53,6.62 17.27,7.41 13.09,11.43 14.11,17.14 9.00,14.40 3.89,17.14 4.91,11.43 0.73,7.41 6.47,6.62" fill="url(#gE)" stroke="#d2d2d2" stroke-width=".7" stroke-linejoin="round"/><polygon transform="translate(19,0)" points="9.00,1.40 11.53,6.62 17.27,7.41 13.09,11.43 14.11,17.14 9.00,14.40 3.89,17.14 4.91,11.43 0.73,7.41 6.47,6.62" fill="url(#gE)" stroke="#d2d2d2" stroke-width=".7" stroke-linejoin="round"/><polygon transform="translate(38,0)" points="9.00,1.40 11.53,6.62 17.27,7.41 13.09,11.43 14.11,17.14 9.00,14.40 3.89,17.14 4.91,11.43 0.73,7.41 6.47,6.62" fill="url(#gE)" stroke="#d2d2d2" stroke-width=".7" stroke-linejoin="round"/><polygon transform="translate(57,0)" points="9.00,1.40 11.53,6.62 17.27,7.41 13.09,11.43 14.11,17.14 9.00,14.40 3.89,17.14 4.91,11.43 0.73,7.41 6.47,6.62" fill="url(#gE)" stroke="#d2d2d2" stroke-width=".7" stroke-linejoin="round"/><polygon transform="translate(76,0)" points="9.00,1.40 11.53,6.62 17.27,7.41 13.09,11.43 14.11,17.14 9.00,14.40 3.89,17.14 4.91,11.43 0.73,7.41 6.47,6.62" fill="url(#gE)" stroke="#d2d2d2" stroke-width=".7" stroke-linejoin="round"/><g clip-path="url(#c4)"><polygon transform="translate(0,0)" points="9.00,1.40 11.53,6.62 17.27,7.41 13.09,11.43 14.11,17.14 9.00,14.40 3.89,17.14 4.91,11.43 0.73,7.41 6.47,6.62" fill="url(#gF)" stroke="#eca53a" stroke-width=".7" stroke-linejoin="round"/><polygon transform="translate(19,0)" points="9.00,1.40 11.53,6.62 17.27,7.41 13.09,11.43 14.11,17.14 9.00,14.40 3.89,17.14 4.91,11.43 0.73,7.41 6.47,6.62" fill="url(#gF)" stroke="#eca53a" stroke-width=".7" stroke-linejoin="round"/><polygon transform="translate(38,0)" points="9.00,1.40 11.53,6.62 17.27,7.41 13.09,11.43 14.11,17.14 9.00,14.40 3.89,17.14 4.91,11.43 0.73,7.41 6.47,6.62" fill="url(#gF)" stroke="#eca53a" stroke-width=".7" stroke-linejoin="round"/><polygon transform="translate(57,0)" points="9.00,1.40 11.53,6.62 17.27,7.41 13.09,11.43 14.11,17.14 9.00,14.40 3.89,17.14 4.91,11.43 0.73,7.41 6.47,6.62" fill="url(#gF)" stroke="#eca53a" stroke-width=".7" stroke-linejoin="round"/><polygon transform="translate(76,0)" points="9.00,1.40 11.53,6.62 17.27,7.41 13.09,11.43 14.11,17.14 9.00,14.40 3.89,17.14 4.91,11.43 0.73,7.41 6.47,6.62" fill="url(#gF)" stroke="#eca53a" stroke-width=".7" stroke-linejoin="round"/></g><clipPath id="c4"><rect x="0" y="0" width="25.1" height="19"/></clipPath></svg>
<div class="c" style="left:1476px;font-size:12.3px">4/1/2016 11:54:38 AM</div>
</div>
<div class="row" style="top:199px">
<div class="c" style="left:3px">6</div>
<div class="cb"></div>
<div class="act-dd">Action</div><div class="tri" style="left:134px;top:15px"></div>
<div class="stg"><svg width="20" height="20" viewBox="0 0 20 20"><path d="M14.8 8.6V2.6H2.2v15.8h12.6v-4.4" fill="none" stroke="#ff6142" stroke-width="1.2"/><path d="M6.2 4.6V2.6c0-.9.7-1.6 1.6-1.6h1.6c.9 0 1.6.7 1.6 1.6v2z" fill="#ff6142"/><circle cx="6.7" cy="8.4" r="1" fill="#ff6142"/><path d="M5.1 11.9v-.8c0-.8.7-1.2 1.6-1.2s1.6.4 1.6 1.2v.8z" fill="#ff6142"/><path d="M4.1 14.5H9" stroke="#ff6142" stroke-width=".9"/><path d="M4.1 16.5H9" stroke="#ffa08a" stroke-width=".8"/><path d="M11.2 14.8l6.8-6.8" stroke="#ff6142" stroke-width="2.3"/><path d="M10.6 15.6l.5-1.5 1 1z" fill="#ff6142"/></svg></div>
<div class="c nm" style="left:232px">Larson, Andrea</div>
<div class="c" style="left:526px">(228) 718-1228</div>
<div class="c" style="left:653px">(804) 855-5855</div>
<div class="c tp" style="left:780px">Talent Pool</div>
<div class="c" style="left:929px">alarsono2@constantcontact.com</div>
<div class="c" style="left:1121px;">Alsen, SD</div>
<div class="c" style="left:1256px">57004</div>
<div class="c" style="left:1348px">32</div>
<svg class="stars" width="95" height="19" viewBox="0 0 95 19"><polygon transform="translate(0,0)" points="9.00,1.40 11.53,6.62 17.27,7.41 13.09,11.43 14.11,17.14 9.00,14.40 3.89,17.14 4.91,11.43 0.73,7.41 6.47,6.62" fill="url(#gE)" stroke="#d2d2d2" stroke-width=".7" stroke-linejoin="round"/><polygon transform="translate(19,0)" points="9.00,1.40 11.53,6.62 17.27,7.41 13.09,11.43 14.11,17.14 9.00,14.40 3.89,17.14 4.91,11.43 0.73,7.41 6.47,6.62" fill="url(#gE)" stroke="#d2d2d2" stroke-width=".7" stroke-linejoin="round"/><polygon transform="translate(38,0)" points="9.00,1.40 11.53,6.62 17.27,7.41 13.09,11.43 14.11,17.14 9.00,14.40 3.89,17.14 4.91,11.43 0.73,7.41 6.47,6.62" fill="url(#gE)" stroke="#d2d2d2" stroke-width=".7" stroke-linejoin="round"/><polygon transform="translate(57,0)" points="9.00,1.40 11.53,6.62 17.27,7.41 13.09,11.43 14.11,17.14 9.00,14.40 3.89,17.14 4.91,11.43 0.73,7.41 6.47,6.62" fill="url(#gE)" stroke="#d2d2d2" stroke-width=".7" stroke-linejoin="round"/><polygon transform="translate(76,0)" points="9.00,1.40 11.53,6.62 17.27,7.41 13.09,11.43 14.11,17.14 9.00,14.40 3.89,17.14 4.91,11.43 0.73,7.41 6.47,6.62" fill="url(#gE)" stroke="#d2d2d2" stroke-width=".7" stroke-linejoin="round"/><g clip-path="url(#c5)"><polygon transform="translate(0,0)" points="9.00,1.40 11.53,6.62 17.27,7.41 13.09,11.43 14.11,17.14 9.00,14.40 3.89,17.14 4.91,11.43 0.73,7.41 6.47,6.62" fill="url(#gF)" stroke="#eca53a" stroke-width=".7" stroke-linejoin="round"/><polygon transform="translate(19,0)" points="9.00,1.40 11.53,6.62 17.27,7.41 13.09,11.43 14.11,17.14 9.00,14.40 3.89,17.14 4.91,11.43 0.73,7.41 6.47,6.62" fill="url(#gF)" stroke="#eca53a" stroke-width=".7" stroke-linejoin="round"/><polygon transform="translate(38,0)" points="9.00,1.40 11.53,6.62 17.27,7.41 13.09,11.43 14.11,17.14 9.00,14.40 3.89,17.14 4.91,11.43 0.73,7.41 6.47,6.62" fill="url(#gF)" stroke="#eca53a" stroke-width=".7" stroke-linejoin="round"/><polygon transform="translate(57,0)" points="9.00,1.40 11.53,6.62 17.27,7.41 13.09,11.43 14.11,17.14 9.00,14.40 3.89,17.14 4.91,11.43 0.73,7.41 6.47,6.62" fill="url(#gF)" stroke="#eca53a" stroke-width=".7" stroke-linejoin="round"/><polygon transform="translate(76,0)" points="9.00,1.40 11.53,6.62 17.27,7.41 13.09,11.43 14.11,17.14 9.00,14.40 3.89,17.14 4.91,11.43 0.73,7.41 6.47,6.62" fill="url(#gF)" stroke="#eca53a" stroke-width=".7" stroke-linejoin="round"/></g><clipPath id="c5"><rect x="0" y="0" width="29.1" height="19"/></clipPath></svg>
<div class="c" style="left:1476px;font-size:12.3px">4/1/2016 11:54:34 AM</div>
</div>
<div class="row" style="top:232px">
<div class="c" style="left:3px">7</div>
<div class="cb"></div>
<div class="act-dd">Action</div><div class="tri" style="left:134px;top:15px"></div>
<div class="stg"><svg width="20" height="20" viewBox="0 0 20 20"><path d="M14.8 8.6V2.6H2.2v15.8h12.6v-4.4" fill="none" stroke="#ff6142" stroke-width="1.2"/><path d="M6.2 4.6V2.6c0-.9.7-1.6 1.6-1.6h1.6c.9 0 1.6.7 1.6 1.6v2z" fill="#ff6142"/><circle cx="6.7" cy="8.4" r="1" fill="#ff6142"/><path d="M5.1 11.9v-.8c0-.8.7-1.2 1.6-1.2s1.6.4 1.6 1.2v.8z" fill="#ff6142"/><path d="M4.1 14.5H9" stroke="#ff6142" stroke-width=".9"/><path d="M4.1 16.5H9" stroke="#ffa08a" stroke-width=".8"/><path d="M11.2 14.8l6.8-6.8" stroke="#ff6142" stroke-width="2.3"/><path d="M10.6 15.6l.5-1.5 1 1z" fill="#ff6142"/></svg></div>
<div class="c nm" style="left:232px">Garza, Chris</div>
<div class="c" style="left:526px">(513) 573-4485</div>
<div class="c" style="left:653px">(404) 987-6793</div>
<div class="c tp" style="left:780px">Talent Pool</div>
<div class="c" style="left:929px">cgarzaom@ask.com</div>
<div class="c" style="left:1121px;">Colman, SD</div>
<div class="c" style="left:1256px">57017</div>
<div class="c" style="left:1348px">47</div>
<svg class="stars" width="95" height="19" viewBox="0 0 95 19"><polygon transform="translate(0,0)" points="9.00,1.40 11.53,6.62 17.27,7.41 13.09,11.43 14.11,17.14 9.00,14.40 3.89,17.14 4.91,11.43 0.73,7.41 6.47,6.62" fill="url(#gE)" stroke="#d2d2d2" stroke-width=".7" stroke-linejoin="round"/><polygon transform="translate(19,0)" points="9.00,1.40 11.53,6.62 17.27,7.41 13.09,11.43 14.11,17.14 9.00,14.40 3.89,17.14 4.91,11.43 0.73,7.41 6.47,6.62" fill="url(#gE)" stroke="#d2d2d2" stroke-width=".7" stroke-linejoin="round"/><polygon transform="translate(38,0)" points="9.00,1.40 11.53,6.62 17.27,7.41 13.09,11.43 14.11,17.14 9.00,14.40 3.89,17.14 4.91,11.43 0.73,7.41 6.47,6.62" fill="url(#gE)" stroke="#d2d2d2" stroke-width=".7" stroke-linejoin="round"/><polygon transform="translate(57,0)" points="9.00,1.40 11.53,6.62 17.27,7.41 13.09,11.43 14.11,17.14 9.00,14.40 3.89,17.14 4.91,11.43 0.73,7.41 6.47,6.62" fill="url(#gE)" stroke="#d2d2d2" stroke-width=".7" stroke-linejoin="round"/><polygon transform="translate(76,0)" points="9.00,1.40 11.53,6.62 17.27,7.41 13.09,11.43 14.11,17.14 9.00,14.40 3.89,17.14 4.91,11.43 0.73,7.41 6.47,6.62" fill="url(#gE)" stroke="#d2d2d2" stroke-width=".7" stroke-linejoin="round"/><g clip-path="url(#c6)"><polygon transform="translate(0,0)" points="9.00,1.40 11.53,6.62 17.27,7.41 13.09,11.43 14.11,17.14 9.00,14.40 3.89,17.14 4.91,11.43 0.73,7.41 6.47,6.62" fill="url(#gF)" stroke="#eca53a" stroke-width=".7" stroke-linejoin="round"/><polygon transform="translate(19,0)" points="9.00,1.40 11.53,6.62 17.27,7.41 13.09,11.43 14.11,17.14 9.00,14.40 3.89,17.14 4.91,11.43 0.73,7.41 6.47,6.62" fill="url(#gF)" stroke="#eca53a" stroke-width=".7" stroke-linejoin="round"/><polygon transform="translate(38,0)" points="9.00,1.40 11.53,6.62 17.27,7.41 13.09,11.43 14.11,17.14 9.00,14.40 3.89,17.14 4.91,11.43 0.73,7.41 6.47,6.62" fill="url(#gF)" stroke="#eca53a" stroke-width=".7" stroke-linejoin="round"/><polygon transform="translate(57,0)" points="9.00,1.40 11.53,6.62 17.27,7.41 13.09,11.43 14.11,17.14 9.00,14.40 3.89,17.14 4.91,11.43 0.73,7.41 6.47,6.62" fill="url(#gF)" stroke="#eca53a" stroke-width=".7" stroke-linejoin="round"/><polygon transform="translate(76,0)" points="9.00,1.40 11.53,6.62 17.27,7.41 13.09,11.43 14.11,17.14 9.00,14.40 3.89,17.14 4.91,11.43 0.73,7.41 6.47,6.62" fill="url(#gF)" stroke="#eca53a" stroke-width=".7" stroke-linejoin="round"/></g><clipPath id="c6"><rect x="0" y="0" width="44.1" height="19"/></clipPath></svg>
<div class="c" style="left:1476px;font-size:12.3px">4/1/2016 11:54:35 AM</div>
</div>
<div class="row" style="top:265px">
<div class="c" style="left:3px">8</div>
<div class="cb"></div>
<div class="act-dd">Action</div><div class="tri" style="left:134px;top:15px"></div>
<div class="stg"><svg width="20" height="20" viewBox="0 0 20 20"><path d="M10.4 1.5L12.900 3.500 17.400 4.400V10.200C17.400 13.900 14.600 17 10.400 18.500 6.300 17 3.500 13.900 3.500 10.200V4.400L7.900 3.500z" fill="none" stroke="#f89a2c" stroke-width="1.2" stroke-linejoin="round"/></svg></div>
<div class="c nm" style="left:232px">Rodriguez, Peter</div>
<div class="c" style="left:371px">Confirm the license.</div>
<div class="c" style="left:526px">(559) 646-3745</div>
<div class="c" style="left:653px">(210) 502-9984</div>
<div class="c tp" style="left:780px">Talent Pool</div>
<div class="c" style="left:929px">prodriguezp5@infoseek.co.jp</div>
<div class="c" style="left:1121px;">Wall Lake, SD</div>
<div class="c" style="left:1256px">57033</div>
<div class="c" style="left:1348px">40</div>
<svg class="stars" width="95" height="19" viewBox="0 0 95 19"><polygon transform="translate(0,0)" points="9.00,1.40 11.53,6.62 17.27,7.41 13.09,11.43 14.11,17.14 9.00,14.40 3.89,17.14 4.91,11.43 0.73,7.41 6.47,6.62" fill="url(#gE)" stroke="#d2d2d2" stroke-width=".7" stroke-linejoin="round"/><polygon transform="translate(19,0)" points="9.00,1.40 11.53,6.62 17.27,7.41 13.09,11.43 14.11,17.14 9.00,14.40 3.89,17.14 4.91,11.43 0.73,7.41 6.47,6.62" fill="url(#gE)" stroke="#d2d2d2" stroke-width=".7" stroke-linejoin="round"/><polygon transform="translate(38,0)" points="9.00,1.40 11.53,6.62 17.27,7.41 13.09,11.43 14.11,17.14 9.00,14.40 3.89,17.14 4.91,11.43 0.73,7.41 6.47,6.62" fill="url(#gE)" stroke="#d2d2d2" stroke-width=".7" stroke-linejoin="round"/><polygon transform="translate(57,0)" points="9.00,1.40 11.53,6.62 17.27,7.41 13.09,11.43 14.11,17.14 9.00,14.40 3.89,17.14 4.91,11.43 0.73,7.41 6.47,6.62" fill="url(#gE)" stroke="#d2d2d2" stroke-width=".7" stroke-linejoin="round"/><polygon transform="translate(76,0)" points="9.00,1.40 11.53,6.62 17.27,7.41 13.09,11.43 14.11,17.14 9.00,14.40 3.89,17.14 4.91,11.43 0.73,7.41 6.47,6.62" fill="url(#gE)" stroke="#d2d2d2" stroke-width=".7" stroke-linejoin="round"/><g clip-path="url(#c7)"><polygon transform="translate(0,0)" points="9.00,1.40 11.53,6.62 17.27,7.41 13.09,11.43 14.11,17.14 9.00,14.40 3.89,17.14 4.91,11.43 0.73,7.41 6.47,6.62" fill="url(#gF)" stroke="#eca53a" stroke-width=".7" stroke-linejoin="round"/><polygon transform="translate(19,0)" points="9.00,1.40 11.53,6.62 17.27,7.41 13.09,11.43 14.11,17.14 9.00,14.40 3.89,17.14 4.91,11.43 0.73,7.41 6.47,6.62" fill="url(#gF)" stroke="#eca53a" stroke-width=".7" stroke-linejoin="round"/><polygon transform="translate(38,0)" points="9.00,1.40 11.53,6.62 17.27,7.41 13.09,11.43 14.11,17.14 9.00,14.40 3.89,17.14 4.91,11.43 0.73,7.41 6.47,6.62" fill="url(#gF)" stroke="#eca53a" stroke-width=".7" stroke-linejoin="round"/><polygon transform="translate(57,0)" points="9.00,1.40 11.53,6.62 17.27,7.41 13.09,11.43 14.11,17.14 9.00,14.40 3.89,17.14 4.91,11.43 0.73,7.41 6.47,6.62" fill="url(#gF)" stroke="#eca53a" stroke-width=".7" stroke-linejoin="round"/><polygon transform="translate(76,0)" points="9.00,1.40 11.53,6.62 17.27,7.41 13.09,11.43 14.11,17.14 9.00,14.40 3.89,17.14 4.91,11.43 0.73,7.41 6.47,6.62" fill="url(#gF)" stroke="#eca53a" stroke-width=".7" stroke-linejoin="round"/></g><clipPath id="c7"><rect x="0" y="0" width="37.1" height="19"/></clipPath></svg>
<div class="c" style="left:1476px;font-size:12.3px">4/1/2016 11:54:36 AM</div>
</div>
<div class="row" style="top:298px">
<div class="c" style="left:3px">9</div>
<div class="cb"></div>
<div class="act-dd">Action</div><div class="tri" style="left:134px;top:15px"></div>
<div class="stg"><svg width="20" height="20" viewBox="0 0 20 20"><rect x="2.4" y="3.6" width="17" height="14.8" rx=".8" fill="none" stroke="#3ddcfb" stroke-width="1.25"/><path d="M7.9 1.2v3.6M13.5 1.2v3.6" stroke="#3ddcfb" stroke-width="1.2"/><path d="M6.1 13.6c-.3-.8-.3-2.2-.3-3.3 0-1.5 1-2.4 2.3-2.4s2.3.9 2.3 2.4c0 1.1 0 2.5-.3 3.3h1.3c.6 0 1 .5 1 1.1v.5c0 .6-.4.8-1 .8H4.6c-.6 0-.8-.2-.8-.8v-.5c0-.6.4-1.1 1-1.1z" fill="#3ddcfb"/><path d="M13.2 8.4h4.6" stroke="#3ddcfb" stroke-width="1"/><path d="M13.2 10.4h4.6M13.2 12.5h4.6" stroke="#9ce8fb" stroke-width=".9"/></svg></div>
<div class="c nm" style="left:232px">Powell, Benjamin</div>
<div class="lnk"><svg width="20" height="20" viewBox="0 0 20 20"><g fill="none" stroke="#23232e" stroke-width="1.15"><rect x="11.2" y="0.9" width="5.4" height="9.4" rx="2.7" transform="rotate(45 13.9 5.6)"/><rect x="3.4" y="8.7" width="5.4" height="9.4" rx="2.7" transform="rotate(45 6.1 13.4)"/><path d="M7.6 11.9l4.8-4.8"/></g></svg></div>
<div class="c" style="left:371px">Worth background check</div>
<div class="c" style="left:526px">(951) 762-1324</div>
<div class="c" style="left:653px">(501) 874-0408</div>
<div class="c tp" style="left:780px">Talent Pool</div>
<div class="c" style="left:929px">bpowellob@answers.com</div>
<div class="c" style="left:1121px;">Sd State Univ, SD</div>
<div class="c" style="left:1256px">57007</div>
<div class="c" style="left:1348px">49</div>
<svg class="stars" width="95" height="19" viewBox="0 0 95 19"><polygon transform="translate(0,0)" points="9.00,1.40 11.53,6.62 17.27,7.41 13.09,11.43 14.11,17.14 9.00,14.40 3.89,17.14 4.91,11.43 0.73,7.41 6.47,6.62" fill="url(#gE)" stroke="#d2d2d2" stroke-width=".7" stroke-linejoin="round"/><polygon transform="translate(19,0)" points="9.00,1.40 11.53,6.62 17.27,7.41 13.09,11.43 14.11,17.14 9.00,14.40 3.89,17.14 4.91,11.43 0.73,7.41 6.47,6.62" fill="url(#gE)" stroke="#d2d2d2" stroke-width=".7" stroke-linejoin="round"/><polygon transform="translate(38,0)" points="9.00,1.40 11.53,6.62 17.27,7.41 13.09,11.43 14.11,17.14 9.00,14.40 3.89,17.14 4.91,11.43 0.73,7.41 6.47,6.62" fill="url(#gE)" stroke="#d2d2d2" stroke-width=".7" stroke-linejoin="round"/><polygon transform="translate(57,0)" points="9.00,1.40 11.53,6.62 17.27,7.41 13.09,11.43 14.11,17.14 9.00,14.40 3.89,17.14 4.91,11.43 0.73,7.41 6.47,6.62" fill="url(#gE)" stroke="#d2d2d2" stroke-width=".7" stroke-linejoin="round"/><polygon transform="translate(76,0)" points="9.00,1.40 11.53,6.62 17.27,7.41 13.09,11.43 14.11,17.14 9.00,14.40 3.89,17.14 4.91,11.43 0.73,7.41 6.47,6.62" fill="url(#gE)" stroke="#d2d2d2" stroke-width=".7" stroke-linejoin="round"/><g clip-path="url(#c8)"><polygon transform="translate(0,0)" points="9.00,1.40 11.53,6.62 17.27,7.41 13.09,11.43 14.11,17.14 9.00,14.40 3.89,17.14 4.91,11.43 0.73,7.41 6.47,6.62" fill="url(#gF)" stroke="#eca53a" stroke-width=".7" stroke-linejoin="round"/><polygon transform="translate(19,0)" points="9.00,1.40 11.53,6.62 17.27,7.41 13.09,11.43 14.11,17.14 9.00,14.40 3.89,17.14 4.91,11.43 0.73,7.41 6.47,6.62" fill="url(#gF)" stroke="#eca53a" stroke-width=".7" stroke-linejoin="round"/><polygon transform="translate(38,0)" points="9.00,1.40 11.53,6.62 17.27,7.41 13.09,11.43 14.11,17.14 9.00,14.40 3.89,17.14 4.91,11.43 0.73,7.41 6.47,6.62" fill="url(#gF)" stroke="#eca53a" stroke-width=".7" stroke-linejoin="round"/><polygon transform="translate(57,0)" points="9.00,1.40 11.53,6.62 17.27,7.41 13.09,11.43 14.11,17.14 9.00,14.40 3.89,17.14 4.91,11.43 0.73,7.41 6.47,6.62" fill="url(#gF)" stroke="#eca53a" stroke-width=".7" stroke-linejoin="round"/><polygon transform="translate(76,0)" points="9.00,1.40 11.53,6.62 17.27,7.41 13.09,11.43 14.11,17.14 9.00,14.40 3.89,17.14 4.91,11.43 0.73,7.41 6.47,6.62" fill="url(#gF)" stroke="#eca53a" stroke-width=".7" stroke-linejoin="round"/></g><clipPath id="c8"><rect x="0" y="0" width="46.1" height="19"/></clipPath></svg>
<div class="c" style="left:1476px;font-size:12.3px">4/1/2016 11:54:35 AM</div>
</div>
<div class="row" style="top:331px">
<div class="c" style="left:3px">10</div>
<div class="cb"></div>
<div class="act-dd">Action</div><div class="tri" style="left:134px;top:15px"></div>
<div class="stg"><svg width="20" height="20" viewBox="0 0 20 20"><rect x="2.4" y="3.6" width="17" height="14.8" rx=".8" fill="none" stroke="#3ddcfb" stroke-width="1.25"/><path d="M7.9 1.2v3.6M13.5 1.2v3.6" stroke="#3ddcfb" stroke-width="1.2"/><path d="M6.1 13.6c-.3-.8-.3-2.2-.3-3.3 0-1.5 1-2.4 2.3-2.4s2.3.9 2.3 2.4c0 1.1 0 2.5-.3 3.3h1.3c.6 0 1 .5 1 1.1v.5c0 .6-.4.8-1 .8H4.6c-.6 0-.8-.2-.8-.8v-.5c0-.6.4-1.1 1-1.1z" fill="#3ddcfb"/><path d="M13.2 8.4h4.6" stroke="#3ddcfb" stroke-width="1"/><path d="M13.2 10.4h4.6M13.2 12.5h4.6" stroke="#9ce8fb" stroke-width=".9"/></svg></div>
<div class="c nm" style="left:232px">Long, Mary</div>
<div class="c" style="left:526px">(253) 225-8811</div>
<div class="c" style="left:653px">(402) 543-7388</div>
<div class="c tp" style="left:780px">Talent Pool</div>
<div class="c" style="left:929px">mlongny@nsw.gov.au</div>
<div class="c" style="left:1121px;">Big Springs, SD</div>
<div class="c" style="left:1256px">57001</div>
<div class="c" style="left:1348px">29</div>
<svg class="stars" width="95" height="19" viewBox="0 0 95 19"><polygon transform="translate(0,0)" points="9.00,1.40 11.53,6.62 17.27,7.41 13.09,11.43 14.11,17.14 9.00,14.40 3.89,17.14 4.91,11.43 0.73,7.41 6.47,6.62" fill="url(#gE)" stroke="#d2d2d2" stroke-width=".7" stroke-linejoin="round"/><polygon transform="translate(19,0)" points="9.00,1.40 11.53,6.62 17.27,7.41 13.09,11.43 14.11,17.14 9.00,14.40 3.89,17.14 4.91,11.43 0.73,7.41 6.47,6.62" fill="url(#gE)" stroke="#d2d2d2" stroke-width=".7" stroke-linejoin="round"/><polygon transform="translate(38,0)" points="9.00,1.40 11.53,6.62 17.27,7.41 13.09,11.43 14.11,17.14 9.00,14.40 3.89,17.14 4.91,11.43 0.73,7.41 6.47,6.62" fill="url(#gE)" stroke="#d2d2d2" stroke-width=".7" stroke-linejoin="round"/><polygon transform="translate(57,0)" points="9.00,1.40 11.53,6.62 17.27,7.41 13.09,11.43 14.11,17.14 9.00,14.40 3.89,17.14 4.91,11.43 0.73,7.41 6.47,6.62" fill="url(#gE)" stroke="#d2d2d2" stroke-width=".7" stroke-linejoin="round"/><polygon transform="translate(76,0)" points="9.00,1.40 11.53,6.62 17.27,7.41 13.09,11.43 14.11,17.14 9.00,14.40 3.89,17.14 4.91,11.43 0.73,7.41 6.47,6.62" fill="url(#gE)" stroke="#d2d2d2" stroke-width=".7" stroke-linejoin="round"/><g clip-path="url(#c9)"><polygon transform="translate(0,0)" points="9.00,1.40 11.53,6.62 17.27,7.41 13.09,11.43 14.11,17.14 9.00,14.40 3.89,17.14 4.91,11.43 0.73,7.41 6.47,6.62" fill="url(#gF)" stroke="#eca53a" stroke-width=".7" stroke-linejoin="round"/><polygon transform="translate(19,0)" points="9.00,1.40 11.53,6.62 17.27,7.41 13.09,11.43 14.11,17.14 9.00,14.40 3.89,17.14 4.91,11.43 0.73,7.41 6.47,6.62" fill="url(#gF)" stroke="#eca53a" stroke-width=".7" stroke-linejoin="round"/><polygon transform="translate(38,0)" points="9.00,1.40 11.53,6.62 17.27,7.41 13.09,11.43 14.11,17.14 9.00,14.40 3.89,17.14 4.91,11.43 0.73,7.41 6.47,6.62" fill="url(#gF)" stroke="#eca53a" stroke-width=".7" stroke-linejoin="round"/><polygon transform="translate(57,0)" points="9.00,1.40 11.53,6.62 17.27,7.41 13.09,11.43 14.11,17.14 9.00,14.40 3.89,17.14 4.91,11.43 0.73,7.41 6.47,6.62" fill="url(#gF)" stroke="#eca53a" stroke-width=".7" stroke-linejoin="round"/><polygon transform="translate(76,0)" points="9.00,1.40 11.53,6.62 17.27,7.41 13.09,11.43 14.11,17.14 9.00,14.40 3.89,17.14 4.91,11.43 0.73,7.41 6.47,6.62" fill="url(#gF)" stroke="#eca53a" stroke-width=".7" stroke-linejoin="round"/></g><clipPath id="c9"><rect x="0" y="0" width="26.1" height="19"/></clipPath></svg>
<div class="c" style="left:1476px;font-size:12.3px">4/1/2016 11:54:34 AM</div>
</div>
<div class="row" style="top:364px">
<div class="c" style="left:3px">11</div>
<div class="cb"></div>
<div class="act-dd">Action</div><div class="tri" style="left:134px;top:15px"></div>
<div class="stg"><svg width="20" height="20" viewBox="0 0 20 20"><circle cx="10" cy="10.3" r="7.6" fill="none" stroke="#3a2840" stroke-width="1.15"/><path d="M7.6 7.9l4.8 4.8M12.4 7.9l-4.8 4.8" stroke="#3a2840" stroke-width="1.15"/></svg></div>
<div class="c nm" style="left:232px">Brooks, Antonio</div>
<div class="c" style="left:371px">Pretty sure he's gone.</div>
<div class="c" style="left:526px">(861) 528-7851 Ex. 67</div>
<div class="c" style="left:653px">(302) 699-3627 Ex. 32</div>
<div class="c tp" style="left:780px">Talent Pool</div>
<div class="c" style="left:929px">abrooksai@harvard.edu</div>
<div class="c" style="left:1121px;">Box Elder, SD</div>
<div class="c" style="left:1256px">57718</div>
<div class="c" style="left:1348px">83</div>
<svg class="stars" width="95" height="19" viewBox="0 0 95 19"><polygon transform="translate(0,0)" points="9.00,1.40 11.53,6.62 17.27,7.41 13.09,11.43 14.11,17.14 9.00,14.40 3.89,17.14 4.91,11.43 0.73,7.41 6.47,6.62" fill="url(#gE)" stroke="#d2d2d2" stroke-width=".7" stroke-linejoin="round"/><polygon transform="translate(19,0)" points="9.00,1.40 11.53,6.62 17.27,7.41 13.09,11.43 14.11,17.14 9.00,14.40 3.89,17.14 4.91,11.43 0.73,7.41 6.47,6.62" fill="url(#gE)" stroke="#d2d2d2" stroke-width=".7" stroke-linejoin="round"/><polygon transform="translate(38,0)" points="9.00,1.40 11.53,6.62 17.27,7.41 13.09,11.43 14.11,17.14 9.00,14.40 3.89,17.14 4.91,11.43 0.73,7.41 6.47,6.62" fill="url(#gE)" stroke="#d2d2d2" stroke-width=".7" stroke-linejoin="round"/><polygon transform="translate(57,0)" points="9.00,1.40 11.53,6.62 17.27,7.41 13.09,11.43 14.11,17.14 9.00,14.40 3.89,17.14 4.91,11.43 0.73,7.41 6.47,6.62" fill="url(#gE)" stroke="#d2d2d2" stroke-width=".7" stroke-linejoin="round"/><polygon transform="translate(76,0)" points="9.00,1.40 11.53,6.62 17.27,7.41 13.09,11.43 14.11,17.14 9.00,14.40 3.89,17.14 4.91,11.43 0.73,7.41 6.47,6.62" fill="url(#gE)" stroke="#d2d2d2" stroke-width=".7" stroke-linejoin="round"/><g clip-path="url(#c10)"><polygon transform="translate(0,0)" points="9.00,1.40 11.53,6.62 17.27,7.41 13.09,11.43 14.11,17.14 9.00,14.40 3.89,17.14 4.91,11.43 0.73,7.41 6.47,6.62" fill="url(#gF)" stroke="#eca53a" stroke-width=".7" stroke-linejoin="round"/><polygon transform="translate(19,0)" points="9.00,1.40 11.53,6.62 17.27,7.41 13.09,11.43 14.11,17.14 9.00,14.40 3.89,17.14 4.91,11.43 0.73,7.41 6.47,6.62" fill="url(#gF)" stroke="#eca53a" stroke-width=".7" stroke-linejoin="round"/><polygon transform="translate(38,0)" points="9.00,1.40 11.53,6.62 17.27,7.41 13.09,11.43 14.11,17.14 9.00,14.40 3.89,17.14 4.91,11.43 0.73,7.41 6.47,6.62" fill="url(#gF)" stroke="#eca53a" stroke-width=".7" stroke-linejoin="round"/><polygon transform="translate(57,0)" points="9.00,1.40 11.53,6.62 17.27,7.41 13.09,11.43 14.11,17.14 9.00,14.40 3.89,17.14 4.91,11.43 0.73,7.41 6.47,6.62" fill="url(#gF)" stroke="#eca53a" stroke-width=".7" stroke-linejoin="round"/><polygon transform="translate(76,0)" points="9.00,1.40 11.53,6.62 17.27,7.41 13.09,11.43 14.11,17.14 9.00,14.40 3.89,17.14 4.91,11.43 0.73,7.41 6.47,6.62" fill="url(#gF)" stroke="#eca53a" stroke-width=".7" stroke-linejoin="round"/></g><clipPath id="c10"><rect x="0" y="0" width="80.1" height="19"/></clipPath></svg>
<div class="c" style="left:1476px;font-size:12.3px">11/15/2016 5:09:02 PM</div>
<div class="c" style="left:1606px">16</div>
</div>
<div class="row" style="top:397px">
<div class="c" style="left:3px">12</div>
<div class="cb"></div>
<div class="act-dd">Action</div><div class="tri" style="left:134px;top:15px"></div>
<div class="stg"><svg width="20" height="20" viewBox="0 0 20 20"><path d="M2.6 4.4L5.6 2.4c.6-.4 1.3-.2 1.7.4l2 3.3c.3.6.2 1.2-.4 1.6L7.4 8.7c1.3 2.8 3.3 4.8 6 6l1.1-1.5c.4-.5 1.1-.7 1.6-.3l3.1 2c.6.4.7 1.1.3 1.7l-1.9 3c-.5.7-1.3.9-2.2.7C8.3 18.500 2.900 12.700 1.800 6.100c-.1-.7.2-1.400.8-1.700z" fill="none" stroke="#6a4a88" stroke-width="1.1"/></svg></div>
<div class="c nm" style="left:232px">Gray, Clarence</div>
<div class="c" style="left:526px">(352) 135-4163</div>
<div class="c" style="left:653px">(440) 588-6859</div>
<div class="c tp" style="left:780px">Talent Pool</div>
<div class="c" style="left:929px">cgrayoa@webmd.com</div>
<div class="c" style="left:1121px;">Brookings, SD</div>
<div class="c" style="left:1256px">57007</div>
<div class="c" style="left:1348px">72</div>
<svg class="stars" width="95" height="19" viewBox="0 0 95 19"><polygon transform="translate(0,0)" points="9.00,1.40 11.53,6.62 17.27,7.41 13.09,11.43 14.11,17.14 9.00,14.40 3.89,17.14 4.91,11.43 0.73,7.41 6.47,6.62" fill="url(#gE)" stroke="#d2d2d2" stroke-width=".7" stroke-linejoin="round"/><polygon transform="translate(19,0)" points="9.00,1.40 11.53,6.62 17.27,7.41 13.09,11.43 14.11,17.14 9.00,14.40 3.89,17.14 4.91,11.43 0.73,7.41 6.47,6.62" fill="url(#gE)" stroke="#d2d2d2" stroke-width=".7" stroke-linejoin="round"/><polygon transform="translate(38,0)" points="9.00,1.40 11.53,6.62 17.27,7.41 13.09,11.43 14.11,17.14 9.00,14.40 3.89,17.14 4.91,11.43 0.73,7.41 6.47,6.62" fill="url(#gE)" stroke="#d2d2d2" stroke-width=".7" stroke-linejoin="round"/><polygon transform="translate(57,0)" points="9.00,1.40 11.53,6.62 17.27,7.41 13.09,11.43 14.11,17.14 9.00,14.40 3.89,17.14 4.91,11.43 0.73,7.41 6.47,6.62" fill="url(#gE)" stroke="#d2d2d2" stroke-width=".7" stroke-linejoin="round"/><polygon transform="translate(76,0)" points="9.00,1.40 11.53,6.62 17.27,7.41 13.09,11.43 14.11,17.14 9.00,14.40 3.89,17.14 4.91,11.43 0.73,7.41 6.47,6.62" fill="url(#gE)" stroke="#d2d2d2" stroke-width=".7" stroke-linejoin="round"/><g clip-path="url(#c11)"><polygon transform="translate(0,0)" points="9.00,1.40 11.53,6.62 17.27,7.41 13.09,11.43 14.11,17.14 9.00,14.40 3.89,17.14 4.91,11.43 0.73,7.41 6.47,6.62" fill="url(#gF)" stroke="#eca53a" stroke-width=".7" stroke-linejoin="round"/><polygon transform="translate(19,0)" points="9.00,1.40 11.53,6.62 17.27,7.41 13.09,11.43 14.11,17.14 9.00,14.40 3.89,17.14 4.91,11.43 0.73,7.41 6.47,6.62" fill="url(#gF)" stroke="#eca53a" stroke-width=".7" stroke-linejoin="round"/><polygon transform="translate(38,0)" points="9.00,1.40 11.53,6.62 17.27,7.41 13.09,11.43 14.11,17.14 9.00,14.40 3.89,17.14 4.91,11.43 0.73,7.41 6.47,6.62" fill="url(#gF)" stroke="#eca53a" stroke-width=".7" stroke-linejoin="round"/><polygon transform="translate(57,0)" points="9.00,1.40 11.53,6.62 17.27,7.41 13.09,11.43 14.11,17.14 9.00,14.40 3.89,17.14 4.91,11.43 0.73,7.41 6.47,6.62" fill="url(#gF)" stroke="#eca53a" stroke-width=".7" stroke-linejoin="round"/><polygon transform="translate(76,0)" points="9.00,1.40 11.53,6.62 17.27,7.41 13.09,11.43 14.11,17.14 9.00,14.40 3.89,17.14 4.91,11.43 0.73,7.41 6.47,6.62" fill="url(#gF)" stroke="#eca53a" stroke-width=".7" stroke-linejoin="round"/></g><clipPath id="c11"><rect x="0" y="0" width="69.1" height="19"/></clipPath></svg>
<div class="c" style="left:1476px;font-size:12.3px">4/1/2016 11:54:35 AM</div>
</div>
<div class="row" style="top:430px">
<div class="c" style="left:3px">13</div>
<div class="cb"></div>
<div class="act-dd">Action</div><div class="tri" style="left:134px;top:15px"></div>
<div class="stg"><svg width="20" height="20" viewBox="0 0 20 20"><path d="M2.6 4.4L5.6 2.4c.6-.4 1.3-.2 1.7.4l2 3.3c.3.6.2 1.2-.4 1.6L7.4 8.7c1.3 2.8 3.3 4.8 6 6l1.1-1.5c.4-.5 1.1-.7 1.6-.3l3.1 2c.6.4.7 1.1.3 1.7l-1.9 3c-.5.7-1.3.9-2.2.7C8.3 18.500 2.900 12.700 1.800 6.100c-.1-.7.2-1.400.8-1.700z" fill="none" stroke="#6a4a88" stroke-width="1.1"/></svg></div>
<div class="c nm" style="left:232px">Howell, Kelly</div>
<div class="c" style="left:371px">Call her back tomorrow.</div>
<div class="c" style="left:526px">(413) 109-9081</div>
<div class="c" style="left:653px">(302) 513-9145</div>
<div class="c tp" style="left:780px">Talent Pool</div>
<div class="c" style="left:929px">khowellpy@ning.com</div>
<div class="c" style="left:1121px;">Center, SD</div>
<div class="c" style="left:1256px">57058</div>
<div class="c" style="left:1348px">86</div>
<svg class="stars" width="95" height="19" viewBox="0 0 95 19"><polygon transform="translate(0,0)" points="9.00,1.40 11.53,6.62 17.27,7.41 13.09,11.43 14.11,17.14 9.00,14.40 3.89,17.14 4.91,11.43 0.73,7.41 6.47,6.62" fill="url(#gE)" stroke="#d2d2d2" stroke-width=".7" stroke-linejoin="round"/><polygon transform="translate(19,0)" points="9.00,1.40 11.53,6.62 17.27,7.41 13.09,11.43 14.11,17.14 9.00,14.40 3.89,17.14 4.91,11.43 0.73,7.41 6.47,6.62" fill="url(#gE)" stroke="#d2d2d2" stroke-width=".7" stroke-linejoin="round"/><polygon transform="translate(38,0)" points="9.00,1.40 11.53,6.62 17.27,7.41 13.09,11.43 14.11,17.14 9.00,14.40 3.89,17.14 4.91,11.43 0.73,7.41 6.47,6.62" fill="url(#gE)" stroke="#d2d2d2" stroke-width=".7" stroke-linejoin="round"/><polygon transform="translate(57,0)" points="9.00,1.40 11.53,6.62 17.27,7.41 13.09,11.43 14.11,17.14 9.00,14.40 3.89,17.14 4.91,11.43 0.73,7.41 6.47,6.62" fill="url(#gE)" stroke="#d2d2d2" stroke-width=".7" stroke-linejoin="round"/><polygon transform="translate(76,0)" points="9.00,1.40 11.53,6.62 17.27,7.41 13.09,11.43 14.11,17.14 9.00,14.40 3.89,17.14 4.91,11.43 0.73,7.41 6.47,6.62" fill="url(#gE)" stroke="#d2d2d2" stroke-width=".7" stroke-linejoin="round"/><g clip-path="url(#c12)"><polygon transform="translate(0,0)" points="9.00,1.40 11.53,6.62 17.27,7.41 13.09,11.43 14.11,17.14 9.00,14.40 3.89,17.14 4.91,11.43 0.73,7.41 6.47,6.62" fill="url(#gF)" stroke="#eca53a" stroke-width=".7" stroke-linejoin="round"/><polygon transform="translate(19,0)" points="9.00,1.40 11.53,6.62 17.27,7.41 13.09,11.43 14.11,17.14 9.00,14.40 3.89,17.14 4.91,11.43 0.73,7.41 6.47,6.62" fill="url(#gF)" stroke="#eca53a" stroke-width=".7" stroke-linejoin="round"/><polygon transform="translate(38,0)" points="9.00,1.40 11.53,6.62 17.27,7.41 13.09,11.43 14.11,17.14 9.00,14.40 3.89,17.14 4.91,11.43 0.73,7.41 6.47,6.62" fill="url(#gF)" stroke="#eca53a" stroke-width=".7" stroke-linejoin="round"/><polygon transform="translate(57,0)" points="9.00,1.40 11.53,6.62 17.27,7.41 13.09,11.43 14.11,17.14 9.00,14.40 3.89,17.14 4.91,11.43 0.73,7.41 6.47,6.62" fill="url(#gF)" stroke="#eca53a" stroke-width=".7" stroke-linejoin="round"/><polygon transform="translate(76,0)" points="9.00,1.40 11.53,6.62 17.27,7.41 13.09,11.43 14.11,17.14 9.00,14.40 3.89,17.14 4.91,11.43 0.73,7.41 6.47,6.62" fill="url(#gF)" stroke="#eca53a" stroke-width=".7" stroke-linejoin="round"/></g><clipPath id="c12"><rect x="0" y="0" width="83.1" height="19"/></clipPath></svg>
<div class="c" style="left:1476px;font-size:12.3px">4/1/2016 11:54:39 AM</div>
</div>
<div class="row" style="top:463px">
<div class="c" style="left:3px">14</div>
<div class="cb"></div>
<div class="act-dd">Action</div><div class="tri" style="left:134px;top:15px"></div>
<div class="stg"><svg width="20" height="20" viewBox="0 0 20 20"><path d="M2.6 4.4L5.6 2.4c.6-.4 1.3-.2 1.7.4l2 3.3c.3.6.2 1.2-.4 1.6L7.4 8.7c1.3 2.8 3.3 4.8 6 6l1.1-1.5c.4-.5 1.1-.7 1.6-.3l3.1 2c.6.4.7 1.1.3 1.7l-1.9 3c-.5.7-1.3.9-2.2.7C8.3 18.500 2.900 12.700 1.800 6.100c-.1-.7.2-1.400.8-1.700z" fill="none" stroke="#2f7f6c" stroke-width="1.1"/></svg></div>
<div class="c nm" style="left:232px">Rivera, Jerry</div>
<div class="c" style="left:526px">(803) 903-5372</div>
<div class="c" style="left:653px">(302) 353-8397</div>
<div class="c tp" style="left:780px">Talent Pool</div>
<div class="c" style="left:929px">jriveraoh@google.co.uk</div>
<div class="c" style="left:1121px;">Dalesburg, SD</div>
<div class="c" style="left:1256px">57014</div>
<div class="c" style="left:1348px">94</div>
<svg class="stars" width="95" height="19" viewBox="0 0 95 19"><polygon transform="translate(0,0)" points="9.00,1.40 11.53,6.62 17.27,7.41 13.09,11.43 14.11,17.14 9.00,14.40 3.89,17.14 4.91,11.43 0.73,7.41 6.47,6.62" fill="url(#gE)" stroke="#d2d2d2" stroke-width=".7" stroke-linejoin="round"/><polygon transform="translate(19,0)" points="9.00,1.40 11.53,6.62 17.27,7.41 13.09,11.43 14.11,17.14 9.00,14.40 3.89,17.14 4.91,11.43 0.73,7.41 6.47,6.62" fill="url(#gE)" stroke="#d2d2d2" stroke-width=".7" stroke-linejoin="round"/><polygon transform="translate(38,0)" points="9.00,1.40 11.53,6.62 17.27,7.41 13.09,11.43 14.11,17.14 9.00,14.40 3.89,17.14 4.91,11.43 0.73,7.41 6.47,6.62" fill="url(#gE)" stroke="#d2d2d2" stroke-width=".7" stroke-linejoin="round"/><polygon transform="translate(57,0)" points="9.00,1.40 11.53,6.62 17.27,7.41 13.09,11.43 14.11,17.14 9.00,14.40 3.89,17.14 4.91,11.43 0.73,7.41 6.47,6.62" fill="url(#gE)" stroke="#d2d2d2" stroke-width=".7" stroke-linejoin="round"/><polygon transform="translate(76,0)" points="9.00,1.40 11.53,6.62 17.27,7.41 13.09,11.43 14.11,17.14 9.00,14.40 3.89,17.14 4.91,11.43 0.73,7.41 6.47,6.62" fill="url(#gE)" stroke="#d2d2d2" stroke-width=".7" stroke-linejoin="round"/><g clip-path="url(#c13)"><polygon transform="translate(0,0)" points="9.00,1.40 11.53,6.62 17.27,7.41 13.09,11.43 14.11,17.14 9.00,14.40 3.89,17.14 4.91,11.43 0.73,7.41 6.47,6.62" fill="url(#gF)" stroke="#eca53a" stroke-width=".7" stroke-linejoin="round"/><polygon transform="translate(19,0)" points="9.00,1.40 11.53,6.62 17.27,7.41 13.09,11.43 14.11,17.14 9.00,14.40 3.89,17.14 4.91,11.43 0.73,7.41 6.47,6.62" fill="url(#gF)" stroke="#eca53a" stroke-width=".7" stroke-linejoin="round"/><polygon transform="translate(38,0)" points="9.00,1.40 11.53,6.62 17.27,7.41 13.09,11.43 14.11,17.14 9.00,14.40 3.89,17.14 4.91,11.43 0.73,7.41 6.47,6.62" fill="url(#gF)" stroke="#eca53a" stroke-width=".7" stroke-linejoin="round"/><polygon transform="translate(57,0)" points="9.00,1.40 11.53,6.62 17.27,7.41 13.09,11.43 14.11,17.14 9.00,14.40 3.89,17.14 4.91,11.43 0.73,7.41 6.47,6.62" fill="url(#gF)" stroke="#eca53a" stroke-width=".7" stroke-linejoin="round"/><polygon transform="translate(76,0)" points="9.00,1.40 11.53,6.62 17.27,7.41 13.09,11.43 14.11,17.14 9.00,14.40 3.89,17.14 4.91,11.43 0.73,7.41 6.47,6.62" fill="url(#gF)" stroke="#eca53a" stroke-width=".7" stroke-linejoin="round"/></g><clipPath id="c13"><rect x="0" y="0" width="91.1" height="19"/></clipPath></svg>
<div class="c" style="left:1476px;font-size:12.3px">4/1/2016 11:54:35 AM</div>
</div>
<div class="row" style="top:496px">
<div class="c" style="left:3px">15</div>
<div class="cb"></div>
<div class="act-dd">Action</div><div class="tri" style="left:134px;top:15px"></div>
<div class="stg"><svg width="20" height="20" viewBox="0 0 20 20"><path d="M2.6 4.4L5.6 2.4c.6-.4 1.3-.2 1.7.4l2 3.3c.3.6.2 1.2-.4 1.6L7.4 8.7c1.3 2.8 3.3 4.8 6 6l1.1-1.5c.4-.5 1.1-.7 1.6-.3l3.1 2c.6.4.7 1.1.3 1.7l-1.9 3c-.5.7-1.3.9-2.2.7C8.3 18.500 2.900 12.700 1.800 6.100c-.1-.7.2-1.400.8-1.700z" fill="none" stroke="#2f7f6c" stroke-width="1.1"/></svg></div>
<div class="c nm" style="left:232px">Fields, Andrea</div>
<div class="c" style="left:526px">(626) 294-1825</div>
<div class="c" style="left:653px">(727) 318-3309</div>
<div class="c tp" style="left:780px">Talent Pool</div>
<div class="c" style="left:929px">afieldso6@mac.com</div>
<div class="c" style="left:1121px;">Corson, SD</div>
<div class="c" style="left:1256px">57005</div>
<div class="c" style="left:1348px">27</div>
<svg class="stars" width="95" height="19" viewBox="0 0 95 19"><polygon transform="translate(0,0)" points="9.00,1.40 11.53,6.62 17.27,7.41 13.09,11.43 14.11,17.14 9.00,14.40 3.89,17.14 4.91,11.43 0.73,7.41 6.47,6.62" fill="url(#gE)" stroke="#d2d2d2" stroke-width=".7" stroke-linejoin="round"/><polygon transform="translate(19,0)" points="9.00,1.40 11.53,6.62 17.27,7.41 13.09,11.43 14.11,17.14 9.00,14.40 3.89,17.14 4.91,11.43 0.73,7.41 6.47,6.62" fill="url(#gE)" stroke="#d2d2d2" stroke-width=".7" stroke-linejoin="round"/><polygon transform="translate(38,0)" points="9.00,1.40 11.53,6.62 17.27,7.41 13.09,11.43 14.11,17.14 9.00,14.40 3.89,17.14 4.91,11.43 0.73,7.41 6.47,6.62" fill="url(#gE)" stroke="#d2d2d2" stroke-width=".7" stroke-linejoin="round"/><polygon transform="translate(57,0)" points="9.00,1.40 11.53,6.62 17.27,7.41 13.09,11.43 14.11,17.14 9.00,14.40 3.89,17.14 4.91,11.43 0.73,7.41 6.47,6.62" fill="url(#gE)" stroke="#d2d2d2" stroke-width=".7" stroke-linejoin="round"/><polygon transform="translate(76,0)" points="9.00,1.40 11.53,6.62 17.27,7.41 13.09,11.43 14.11,17.14 9.00,14.40 3.89,17.14 4.91,11.43 0.73,7.41 6.47,6.62" fill="url(#gE)" stroke="#d2d2d2" stroke-width=".7" stroke-linejoin="round"/><g clip-path="url(#c14)"><polygon transform="translate(0,0)" points="9.00,1.40 11.53,6.62 17.27,7.41 13.09,11.43 14.11,17.14 9.00,14.40 3.89,17.14 4.91,11.43 0.73,7.41 6.47,6.62" fill="url(#gF)" stroke="#eca53a" stroke-width=".7" stroke-linejoin="round"/><polygon transform="translate(19,0)" points="9.00,1.40 11.53,6.62 17.27,7.41 13.09,11.43 14.11,17.14 9.00,14.40 3.89,17.14 4.91,11.43 0.73,7.41 6.47,6.62" fill="url(#gF)" stroke="#eca53a" stroke-width=".7" stroke-linejoin="round"/><polygon transform="translate(38,0)" points="9.00,1.40 11.53,6.62 17.27,7.41 13.09,11.43 14.11,17.14 9.00,14.40 3.89,17.14 4.91,11.43 0.73,7.41 6.47,6.62" fill="url(#gF)" stroke="#eca53a" stroke-width=".7" stroke-linejoin="round"/><polygon transform="translate(57,0)" points="9.00,1.40 11.53,6.62 17.27,7.41 13.09,11.43 14.11,17.14 9.00,14.40 3.89,17.14 4.91,11.43 0.73,7.41 6.47,6.62" fill="url(#gF)" stroke="#eca53a" stroke-width=".7" stroke-linejoin="round"/><polygon transform="translate(76,0)" points="9.00,1.40 11.53,6.62 17.27,7.41 13.09,11.43 14.11,17.14 9.00,14.40 3.89,17.14 4.91,11.43 0.73,7.41 6.47,6.62" fill="url(#gF)" stroke="#eca53a" stroke-width=".7" stroke-linejoin="round"/></g><clipPath id="c14"><rect x="0" y="0" width="24.1" height="19"/></clipPath></svg>
<div class="c" style="left:1476px;font-size:12.3px">4/1/2016 11:54:34 AM</div>
</div>
<div class="row" style="top:529px">
<div class="c" style="left:3px">16</div>
<div class="cb"></div>
<div class="act-dd">Action</div><div class="tri" style="left:134px;top:15px"></div>
<div class="stg"><svg width="20" height="20" viewBox="0 0 20 20"><circle cx="10" cy="10.3" r="8.4" fill="none" stroke="#6e6e74" stroke-width="1.1"/><path d="M12.6 7.4c-.4-1-1.400-1.600-2.600-1.600-1.500 0-2.600.8-2.600 2 0 2.900 5.400 1.700 5.400 4.600 0 1.200-1.100 2.100-2.700 2.100-1.300 0-2.400-.7-2.800-1.800M10 4.300v1.500M10 14.500V16.200" fill="none" stroke="#6e6e74" stroke-width="1.1"/></svg></div>
<div class="c nm" style="left:232px">Powell, Michelle</div>
<div class="lnk"><svg width="20" height="20" viewBox="0 0 20 20"><g fill="none" stroke="#23232e" stroke-width="1.15"><rect x="11.2" y="0.9" width="5.4" height="9.4" rx="2.7" transform="rotate(45 13.9 5.6)"/><rect x="3.4" y="8.7" width="5.4" height="9.4" rx="2.7" transform="rotate(45 6.1 13.4)"/><path d="M7.6 11.9l4.8-4.8"/></g></svg></div>
<div class="c" style="left:371px">Expectations are high.</div>
<div class="c" style="left:526px">(770) 664-7865</div>
<div class="c" style="left:653px">(907) 709-4511</div>
<div class="c tp" style="left:780px">Talent Pool</div>
<div class="c" style="left:929px">mpowellqp@google.com.br</div>
<div class="c" style="left:1121px;">Sioux Falls, SD</div>
<div class="c" style="left:1256px">57104</div>
<div class="c" style="left:1348px">97</div>
<svg class="stars" width="95" height="19" viewBox="0 0 95 19"><polygon transform="translate(0,0)" points="9.00,1.40 11.53,6.62 17.27,7.41 13.09,11.43 14.11,17.14 9.00,14.40 3.89,17.14 4.91,11.43 0.73,7.41 6.47,6.62" fill="url(#gE)" stroke="#d2d2d2" stroke-width=".7" stroke-linejoin="round"/><polygon transform="translate(19,0)" points="9.00,1.40 11.53,6.62 17.27,7.41 13.09,11.43 14.11,17.14 9.00,14.40 3.89,17.14 4.91,11.43 0.73,7.41 6.47,6.62" fill="url(#gE)" stroke="#d2d2d2" stroke-width=".7" stroke-linejoin="round"/><polygon transform="translate(38,0)" points="9.00,1.40 11.53,6.62 17.27,7.41 13.09,11.43 14.11,17.14 9.00,14.40 3.89,17.14 4.91,11.43 0.73,7.41 6.47,6.62" fill="url(#gE)" stroke="#d2d2d2" stroke-width=".7" stroke-linejoin="round"/><polygon transform="translate(57,0)" points="9.00,1.40 11.53,6.62 17.27,7.41 13.09,11.43 14.11,17.14 9.00,14.40 3.89,17.14 4.91,11.43 0.73,7.41 6.47,6.62" fill="url(#gE)" stroke="#d2d2d2" stroke-width=".7" stroke-linejoin="round"/><polygon transform="translate(76,0)" points="9.00,1.40 11.53,6.62 17.27,7.41 13.09,11.43 14.11,17.14 9.00,14.40 3.89,17.14 4.91,11.43 0.73,7.41 6.47,6.62" fill="url(#gE)" stroke="#d2d2d2" stroke-width=".7" stroke-linejoin="round"/><g clip-path="url(#c15)"><polygon transform="translate(0,0)" points="9.00,1.40 11.53,6.62 17.27,7.41 13.09,11.43 14.11,17.14 9.00,14.40 3.89,17.14 4.91,11.43 0.73,7.41 6.47,6.62" fill="url(#gF)" stroke="#eca53a" stroke-width=".7" stroke-linejoin="round"/><polygon transform="translate(19,0)" points="9.00,1.40 11.53,6.62 17.27,7.41 13.09,11.43 14.11,17.14 9.00,14.40 3.89,17.14 4.91,11.43 0.73,7.41 6.47,6.62" fill="url(#gF)" stroke="#eca53a" stroke-width=".7" stroke-linejoin="round"/><polygon transform="translate(38,0)" points="9.00,1.40 11.53,6.62 17.27,7.41 13.09,11.43 14.11,17.14 9.00,14.40 3.89,17.14 4.91,11.43 0.73,7.41 6.47,6.62" fill="url(#gF)" stroke="#eca53a" stroke-width=".7" stroke-linejoin="round"/><polygon transform="translate(57,0)" points="9.00,1.40 11.53,6.62 17.27,7.41 13.09,11.43 14.11,17.14 9.00,14.40 3.89,17.14 4.91,11.43 0.73,7.41 6.47,6.62" fill="url(#gF)" stroke="#eca53a" stroke-width=".7" stroke-linejoin="round"/><polygon transform="translate(76,0)" points="9.00,1.40 11.53,6.62 17.27,7.41 13.09,11.43 14.11,17.14 9.00,14.40 3.89,17.14 4.91,11.43 0.73,7.41 6.47,6.62" fill="url(#gF)" stroke="#eca53a" stroke-width=".7" stroke-linejoin="round"/></g><clipPath id="c15"><rect x="0" y="0" width="94.1" height="19"/></clipPath></svg>
<div class="c" style="left:1476px;font-size:12.3px">4/1/2016 11:54:40 AM</div>
</div>
<div class="row" style="top:562px">
<div class="c" style="left:3px">17</div>
<div class="cb"></div>
<div class="act-dd">Action</div><div class="tri" style="left:134px;top:15px"></div>
<div class="stg"><svg width="20" height="20" viewBox="0 0 20 20"><circle cx="10" cy="10.3" r="8.4" fill="none" stroke="#6e6e74" stroke-width="1.1"/><path d="M12.6 7.4c-.4-1-1.400-1.600-2.600-1.600-1.500 0-2.600.8-2.600 2 0 2.900 5.400 1.700 5.400 4.600 0 1.200-1.100 2.100-2.700 2.100-1.300 0-2.400-.7-2.800-1.800M10 4.300v1.500M10 14.500V16.200" fill="none" stroke="#6e6e74" stroke-width="1.1"/></svg></div>
<div class="c nm" style="left:232px">Bradley, Keith</div>
<div class="c" style="left:526px">(949) 914-2331</div>
<div class="c" style="left:653px">(415) 456-8740</div>
<div class="c tp" style="left:780px">Talent Pool</div>
<div class="c" style="left:929px">kbradleypc@samsung.com</div>
<div class="c" style="left:1121px;">Hurley, SD</div>
<div class="c" style="left:1256px">57036</div>
<div class="c" style="left:1348px">54</div>
<svg class="stars" width="95" height="19" viewBox="0 0 95 19"><polygon transform="translate(0,0)" points="9.00,1.40 11.53,6.62 17.27,7.41 13.09,11.43 14.11,17.14 9.00,14.40 3.89,17.14 4.91,11.43 0.73,7.41 6.47,6.62" fill="url(#gE)" stroke="#d2d2d2" stroke-width=".7" stroke-linejoin="round"/><polygon transform="translate(19,0)" points="9.00,1.40 11.53,6.62 17.27,7.41 13.09,11.43 14.11,17.14 9.00,14.40 3.89,17.14 4.91,11.43 0.73,7.41 6.47,6.62" fill="url(#gE)" stroke="#d2d2d2" stroke-width=".7" stroke-linejoin="round"/><polygon transform="translate(38,0)" points="9.00,1.40 11.53,6.62 17.27,7.41 13.09,11.43 14.11,17.14 9.00,14.40 3.89,17.14 4.91,11.43 0.73,7.41 6.47,6.62" fill="url(#gE)" stroke="#d2d2d2" stroke-width=".7" stroke-linejoin="round"/><polygon transform="translate(57,0)" points="9.00,1.40 11.53,6.62 17.27,7.41 13.09,11.43 14.11,17.14 9.00,14.40 3.89,17.14 4.91,11.43 0.73,7.41 6.47,6.62" fill="url(#gE)" stroke="#d2d2d2" stroke-width=".7" stroke-linejoin="round"/><polygon transform="translate(76,0)" points="9.00,1.40 11.53,6.62 17.27,7.41 13.09,11.43 14.11,17.14 9.00,14.40 3.89,17.14 4.91,11.43 0.73,7.41 6.47,6.62" fill="url(#gE)" stroke="#d2d2d2" stroke-width=".7" stroke-linejoin="round"/><g clip-path="url(#c16)"><polygon transform="translate(0,0)" points="9.00,1.40 11.53,6.62 17.27,7.41 13.09,11.43 14.11,17.14 9.00,14.40 3.89,17.14 4.91,11.43 0.73,7.41 6.47,6.62" fill="url(#gF)" stroke="#eca53a" stroke-width=".7" stroke-linejoin="round"/><polygon transform="translate(19,0)" points="9.00,1.40 11.53,6.62 17.27,7.41 13.09,11.43 14.11,17.14 9.00,14.40 3.89,17.14 4.91,11.43 0.73,7.41 6.47,6.62" fill="url(#gF)" stroke="#eca53a" stroke-width=".7" stroke-linejoin="round"/><polygon transform="translate(38,0)" points="9.00,1.40 11.53,6.62 17.27,7.41 13.09,11.43 14.11,17.14 9.00,14.40 3.89,17.14 4.91,11.43 0.73,7.41 6.47,6.62" fill="url(#gF)" stroke="#eca53a" stroke-width=".7" stroke-linejoin="round"/><polygon transform="translate(57,0)" points="9.00,1.40 11.53,6.62 17.27,7.41 13.09,11.43 14.11,17.14 9.00,14.40 3.89,17.14 4.91,11.43 0.73,7.41 6.47,6.62" fill="url(#gF)" stroke="#eca53a" stroke-width=".7" stroke-linejoin="round"/><polygon transform="translate(76,0)" points="9.00,1.40 11.53,6.62 17.27,7.41 13.09,11.43 14.11,17.14 9.00,14.40 3.89,17.14 4.91,11.43 0.73,7.41 6.47,6.62" fill="url(#gF)" stroke="#eca53a" stroke-width=".7" stroke-linejoin="round"/></g><clipPath id="c16"><rect x="0" y="0" width="51.1" height="19"/></clipPath></svg>
<div class="c" style="left:1476px;font-size:12.3px">4/1/2016 11:54:37 AM</div>
</div>
<div class="row" style="top:595px">
<div class="c" style="left:3px">18</div>
<div class="cb"></div>
<div class="act-dd">Action</div><div class="tri" style="left:134px;top:15px"></div>
<div class="stg"><svg width="20" height="20" viewBox="0 0 20 20"><path d="M11.8 7.300H16.700C17.700 7.300 18.500 8.100 18.500 9.100V10C18.500 10.500 18.300 10.900 17.900 11.200 18.200 11.700 18.200 12.500 17.700 12.900 17.900 13.400 17.700 14.200 17.200 14.500V15.800C17.200 17 16.300 18.100 15 18.300H6.500L5.300 17.300H3.600C2.900 17.300 2.400 16.700 2.400 16V10.500C2.400 9.800 2.800 9.300 3.500 9.100 6.600 8.300 8.900 5.600 9.600 2.300 9.800 1.500 10.400 1.100 11.100 1.200 11.800 1.400 12.100 2.100 12 2.900z" fill="none" stroke="#a8264a" stroke-width="1.15" stroke-linejoin="round"/></svg></div>
<div class="c nm" style="left:232px">Palmer, Earl</div>
<div class="c" style="left:526px">(301) 778-172</div>
<div class="c" style="left:653px">(520) 216-2782</div>
<div class="c tp" style="left:780px">Talent Pool</div>
<div class="c" style="left:929px">epalmerr0@newyorker.com</div>
<div class="c" style="left:1121px;">Sioux Falls, SD</div>
<div class="c" style="left:1256px">57116</div>
<div class="c" style="left:1348px">11</div>
<svg class="stars" width="95" height="19" viewBox="0 0 95 19"><polygon transform="translate(0,0)" points="9.00,1.40 11.53,6.62 17.27,7.41 13.09,11.43 14.11,17.14 9.00,14.40 3.89,17.14 4.91,11.43 0.73,7.41 6.47,6.62" fill="url(#gE)" stroke="#d2d2d2" stroke-width=".7" stroke-linejoin="round"/><polygon transform="translate(19,0)" points="9.00,1.40 11.53,6.62 17.27,7.41 13.09,11.43 14.11,17.14 9.00,14.40 3.89,17.14 4.91,11.43 0.73,7.41 6.47,6.62" fill="url(#gE)" stroke="#d2d2d2" stroke-width=".7" stroke-linejoin="round"/><polygon transform="translate(38,0)" points="9.00,1.40 11.53,6.62 17.27,7.41 13.09,11.43 14.11,17.14 9.00,14.40 3.89,17.14 4.91,11.43 0.73,7.41 6.47,6.62" fill="url(#gE)" stroke="#d2d2d2" stroke-width=".7" stroke-linejoin="round"/><polygon transform="translate(57,0)" points="9.00,1.40 11.53,6.62 17.27,7.41 13.09,11.43 14.11,17.14 9.00,14.40 3.89,17.14 4.91,11.43 0.73,7.41 6.47,6.62" fill="url(#gE)" stroke="#d2d2d2" stroke-width=".7" stroke-linejoin="round"/><polygon transform="translate(76,0)" points="9.00,1.40 11.53,6.62 17.27,7.41 13.09,11.43 14.11,17.14 9.00,14.40 3.89,17.14 4.91,11.43 0.73,7.41 6.47,6.62" fill="url(#gE)" stroke="#d2d2d2" stroke-width=".7" stroke-linejoin="round"/><g clip-path="url(#c17)"><polygon transform="translate(0,0)" points="9.00,1.40 11.53,6.62 17.27,7.41 13.09,11.43 14.11,17.14 9.00,14.40 3.89,17.14 4.91,11.43 0.73,7.41 6.47,6.62" fill="url(#gF)" stroke="#eca53a" stroke-width=".7" stroke-linejoin="round"/><polygon transform="translate(19,0)" points="9.00,1.40 11.53,6.62 17.27,7.41 13.09,11.43 14.11,17.14 9.00,14.40 3.89,17.14 4.91,11.43 0.73,7.41 6.47,6.62" fill="url(#gF)" stroke="#eca53a" stroke-width=".7" stroke-linejoin="round"/><polygon transform="translate(38,0)" points="9.00,1.40 11.53,6.62 17.27,7.41 13.09,11.43 14.11,17.14 9.00,14.40 3.89,17.14 4.91,11.43 0.73,7.41 6.47,6.62" fill="url(#gF)" stroke="#eca53a" stroke-width=".7" stroke-linejoin="round"/><polygon transform="translate(57,0)" points="9.00,1.40 11.53,6.62 17.27,7.41 13.09,11.43 14.11,17.14 9.00,14.40 3.89,17.14 4.91,11.43 0.73,7.41 6.47,6.62" fill="url(#gF)" stroke="#eca53a" stroke-width=".7" stroke-linejoin="round"/><polygon transform="translate(76,0)" points="9.00,1.40 11.53,6.62 17.27,7.41 13.09,11.43 14.11,17.14 9.00,14.40 3.89,17.14 4.91,11.43 0.73,7.41 6.47,6.62" fill="url(#gF)" stroke="#eca53a" stroke-width=".7" stroke-linejoin="round"/></g><clipPath id="c17"><rect x="0" y="0" width="8.1" height="19"/></clipPath></svg>
<div class="c" style="left:1476px;font-size:12.3px">4/1/2016 11:54:41 AM</div>
</div>
<div class="row" style="top:628px">
<div class="c" style="left:3px">19</div>
<div class="cb"></div>
<div class="act-dd">Action</div><div class="tri" style="left:134px;top:15px"></div>
<div class="stg"><svg width="20" height="20" viewBox="0 0 20 20"><path d="M11.8 7.300H16.700C17.700 7.300 18.500 8.100 18.500 9.100V10C18.500 10.500 18.300 10.900 17.900 11.200 18.200 11.700 18.200 12.500 17.700 12.900 17.900 13.400 17.700 14.200 17.200 14.500V15.800C17.200 17 16.300 18.100 15 18.300H6.500L5.300 17.300H3.600C2.900 17.300 2.400 16.700 2.400 16V10.500C2.400 9.800 2.800 9.300 3.500 9.100 6.600 8.300 8.900 5.600 9.600 2.300 9.800 1.500 10.400 1.100 11.100 1.200 11.800 1.400 12.100 2.100 12 2.900z" fill="none" stroke="#a8264a" stroke-width="1.15" stroke-linejoin="round"/></svg></div>
<div class="c nm" style="left:232px">Hansen, Angela</div>
<div class="c" style="left:371px">Continue forward.</div>
<div class="c" style="left:526px">(814) 246-9194</div>
<div class="c" style="left:653px">(402) 187-7770</div>
<div class="c tp" style="left:780px">Talent Pool</div>
<div class="c" style="left:929px">ahansenoi@google.co.uk</div>
<div class="c" style="left:1121px;">Chancellor, SD</div>
<div class="c" style="left:1256px">57015</div>
<div class="c" style="left:1348px">70</div>
<svg class="stars" width="95" height="19" viewBox="0 0 95 19"><polygon transform="translate(0,0)" points="9.00,1.40 11.53,6.62 17.27,7.41 13.09,11.43 14.11,17.14 9.00,14.40 3.89,17.14 4.91,11.43 0.73,7.41 6.47,6.62" fill="url(#gE)" stroke="#d2d2d2" stroke-width=".7" stroke-linejoin="round"/><polygon transform="translate(19,0)" points="9.00,1.40 11.53,6.62 17.27,7.41 13.09,11.43 14.11,17.14 9.00,14.40 3.89,17.14 4.91,11.43 0.73,7.41 6.47,6.62" fill="url(#gE)" stroke="#d2d2d2" stroke-width=".7" stroke-linejoin="round"/><polygon transform="translate(38,0)" points="9.00,1.40 11.53,6.62 17.27,7.41 13.09,11.43 14.11,17.14 9.00,14.40 3.89,17.14 4.91,11.43 0.73,7.41 6.47,6.62" fill="url(#gE)" stroke="#d2d2d2" stroke-width=".7" stroke-linejoin="round"/><polygon transform="translate(57,0)" points="9.00,1.40 11.53,6.62 17.27,7.41 13.09,11.43 14.11,17.14 9.00,14.40 3.89,17.14 4.91,11.43 0.73,7.41 6.47,6.62" fill="url(#gE)" stroke="#d2d2d2" stroke-width=".7" stroke-linejoin="round"/><polygon transform="translate(76,0)" points="9.00,1.40 11.53,6.62 17.27,7.41 13.09,11.43 14.11,17.14 9.00,14.40 3.89,17.14 4.91,11.43 0.73,7.41 6.47,6.62" fill="url(#gE)" stroke="#d2d2d2" stroke-width=".7" stroke-linejoin="round"/><g clip-path="url(#c18)"><polygon transform="translate(0,0)" points="9.00,1.40 11.53,6.62 17.27,7.41 13.09,11.43 14.11,17.14 9.00,14.40 3.89,17.14 4.91,11.43 0.73,7.41 6.47,6.62" fill="url(#gF)" stroke="#eca53a" stroke-width=".7" stroke-linejoin="round"/><polygon transform="translate(19,0)" points="9.00,1.40 11.53,6.62 17.27,7.41 13.09,11.43 14.11,17.14 9.00,14.40 3.89,17.14 4.91,11.43 0.73,7.41 6.47,6.62" fill="url(#gF)" stroke="#eca53a" stroke-width=".7" stroke-linejoin="round"/><polygon transform="translate(38,0)" points="9.00,1.40 11.53,6.62 17.27,7.41 13.09,11.43 14.11,17.14 9.00,14.40 3.89,17.14 4.91,11.43 0.73,7.41 6.47,6.62" fill="url(#gF)" stroke="#eca53a" stroke-width=".7" stroke-linejoin="round"/><polygon transform="translate(57,0)" points="9.00,1.40 11.53,6.62 17.27,7.41 13.09,11.43 14.11,17.14 9.00,14.40 3.89,17.14 4.91,11.43 0.73,7.41 6.47,6.62" fill="url(#gF)" stroke="#eca53a" stroke-width=".7" stroke-linejoin="round"/><polygon transform="translate(76,0)" points="9.00,1.40 11.53,6.62 17.27,7.41 13.09,11.43 14.11,17.14 9.00,14.40 3.89,17.14 4.91,11.43 0.73,7.41 6.47,6.62" fill="url(#gF)" stroke="#eca53a" stroke-width=".7" stroke-linejoin="round"/></g><clipPath id="c18"><rect x="0" y="0" width="67.1" height="19"/></clipPath></svg>
<div class="c" style="left:1476px;font-size:12.3px">4/1/2016 11:54:35 AM</div>
</div>
<div class="row" style="top:661px">
<div class="c" style="left:3px">20</div>
<div class="cb"></div>
<div class="act-dd">Action</div><div class="tri" style="left:134px;top:15px"></div>
<div class="stg"><svg width="20" height="20" viewBox="0 0 20 20"><path d="M11.8 7.300H16.700C17.700 7.300 18.500 8.100 18.500 9.100V10C18.500 10.500 18.300 10.900 17.900 11.200 18.200 11.700 18.200 12.500 17.700 12.900 17.900 13.400 17.700 14.200 17.200 14.500V15.800C17.200 17 16.300 18.100 15 18.300H6.500L5.300 17.300H3.600C2.900 17.300 2.400 16.700 2.400 16V10.500C2.400 9.800 2.800 9.300 3.500 9.100 6.600 8.300 8.900 5.600 9.600 2.300 9.800 1.500 10.400 1.100 11.100 1.200 11.800 1.400 12.100 2.100 12 2.900z" fill="none" stroke="#a8264a" stroke-width="1.15" stroke-linejoin="round"/></svg></div>
<div class="c nm" style="left:232px">Evans, Adam</div>
<div class="c" style="left:526px">(651) 482-7175</div>
<div class="c" style="left:653px">(626) 689-8670</div>
<div class="c tp" style="left:780px">Talent Pool</div>
<div class="c" style="left:929px">aevanspx@symantec.com</div>
<div class="c" style="left:1121px;">Rutland, SD</div>
<div class="c" style="left:1256px">57057</div>
<div class="c" style="left:1348px">89</div>
<svg class="stars" width="95" height="19" viewBox="0 0 95 19"><polygon transform="translate(0,0)" points="9.00,1.40 11.53,6.62 17.27,7.41 13.09,11.43 14.11,17.14 9.00,14.40 3.89,17.14 4.91,11.43 0.73,7.41 6.47,6.62" fill="url(#gE)" stroke="#d2d2d2" stroke-width=".7" stroke-linejoin="round"/><polygon transform="translate(19,0)" points="9.00,1.40 11.53,6.62 17.27,7.41 13.09,11.43 14.11,17.14 9.00,14.40 3.89,17.14 4.91,11.43 0.73,7.41 6.47,6.62" fill="url(#gE)" stroke="#d2d2d2" stroke-width=".7" stroke-linejoin="round"/><polygon transform="translate(38,0)" points="9.00,1.40 11.53,6.62 17.27,7.41 13.09,11.43 14.11,17.14 9.00,14.40 3.89,17.14 4.91,11.43 0.73,7.41 6.47,6.62" fill="url(#gE)" stroke="#d2d2d2" stroke-width=".7" stroke-linejoin="round"/><polygon transform="translate(57,0)" points="9.00,1.40 11.53,6.62 17.27,7.41 13.09,11.43 14.11,17.14 9.00,14.40 3.89,17.14 4.91,11.43 0.73,7.41 6.47,6.62" fill="url(#gE)" stroke="#d2d2d2" stroke-width=".7" stroke-linejoin="round"/><polygon transform="translate(76,0)" points="9.00,1.40 11.53,6.62 17.27,7.41 13.09,11.43 14.11,17.14 9.00,14.40 3.89,17.14 4.91,11.43 0.73,7.41 6.47,6.62" fill="url(#gE)" stroke="#d2d2d2" stroke-width=".7" stroke-linejoin="round"/><g clip-path="url(#c19)"><polygon transform="translate(0,0)" points="9.00,1.40 11.53,6.62 17.27,7.41 13.09,11.43 14.11,17.14 9.00,14.40 3.89,17.14 4.91,11.43 0.73,7.41 6.47,6.62" fill="url(#gF)" stroke="#eca53a" stroke-width=".7" stroke-linejoin="round"/><polygon transform="translate(19,0)" points="9.00,1.40 11.53,6.62 17.27,7.41 13.09,11.43 14.11,17.14 9.00,14.40 3.89,17.14 4.91,11.43 0.73,7.41 6.47,6.62" fill="url(#gF)" stroke="#eca53a" stroke-width=".7" stroke-linejoin="round"/><polygon transform="translate(38,0)" points="9.00,1.40 11.53,6.62 17.27,7.41 13.09,11.43 14.11,17.14 9.00,14.40 3.89,17.14 4.91,11.43 0.73,7.41 6.47,6.62" fill="url(#gF)" stroke="#eca53a" stroke-width=".7" stroke-linejoin="round"/><polygon transform="translate(57,0)" points="9.00,1.40 11.53,6.62 17.27,7.41 13.09,11.43 14.11,17.14 9.00,14.40 3.89,17.14 4.91,11.43 0.73,7.41 6.47,6.62" fill="url(#gF)" stroke="#eca53a" stroke-width=".7" stroke-linejoin="round"/><polygon transform="translate(76,0)" points="9.00,1.40 11.53,6.62 17.27,7.41 13.09,11.43 14.11,17.14 9.00,14.40 3.89,17.14 4.91,11.43 0.73,7.41 6.47,6.62" fill="url(#gF)" stroke="#eca53a" stroke-width=".7" stroke-linejoin="round"/></g><clipPath id="c19"><rect x="0" y="0" width="86.1" height="19"/></clipPath></svg>
<div class="c" style="left:1476px;font-size:12.3px">4/1/2016 11:54:38 AM</div>
</div>
<div class="row" style="top:694px">
<div class="c" style="left:3px">21</div>
<div class="cb"></div>
<div class="act-dd">Action</div><div class="tri" style="left:134px;top:15px"></div>
<div class="stg"><svg width="20" height="20" viewBox="0 0 20 20"><path d="M11.8 7.300H16.700C17.700 7.300 18.500 8.100 18.500 9.100V10C18.500 10.500 18.300 10.900 17.900 11.200 18.200 11.700 18.200 12.500 17.700 12.900 17.900 13.400 17.700 14.200 17.200 14.500V15.800C17.200 17 16.300 18.100 15 18.300H6.500L5.300 17.300H3.600C2.900 17.300 2.400 16.700 2.400 16V10.500C2.400 9.800 2.800 9.300 3.500 9.100 6.600 8.300 8.900 5.600 9.600 2.300 9.800 1.500 10.400 1.100 11.100 1.200 11.800 1.400 12.100 2.100 12 2.900z" fill="none" stroke="#a8264a" stroke-width="1.15" stroke-linejoin="round"/></svg></div>
<div class="c nm" style="left:232px">Peterson, Michael</div>
<div class="c" style="left:526px">(608) 655-3437</div>
<div class="c" style="left:653px">(608) 453-8788</div>
<div class="c tp" style="left:780px">Talent Pool</div>
<div class="c" style="left:929px">mpeterson2@dailymail.co.uk</div>
<div class="c" style="left:1121px;">Sioux Falls, SD</div>
<div class="c" style="left:1256px">57110</div>
<div class="c" style="left:1348px">33</div>
<svg class="stars" width="95" height="19" viewBox="0 0 95 19"><polygon transform="translate(0,0)" points="9.00,1.40 11.53,6.62 17.27,7.41 13.09,11.43 14.11,17.14 9.00,14.40 3.89,17.14 4.91,11.43 0.73,7.41 6.47,6.62" fill="url(#gE)" stroke="#d2d2d2" stroke-width=".7" stroke-linejoin="round"/><polygon transform="translate(19,0)" points="9.00,1.40 11.53,6.62 17.27,7.41 13.09,11.43 14.11,17.14 9.00,14.40 3.89,17.14 4.91,11.43 0.73,7.41 6.47,6.62" fill="url(#gE)" stroke="#d2d2d2" stroke-width=".7" stroke-linejoin="round"/><polygon transform="translate(38,0)" points="9.00,1.40 11.53,6.62 17.27,7.41 13.09,11.43 14.11,17.14 9.00,14.40 3.89,17.14 4.91,11.43 0.73,7.41 6.47,6.62" fill="url(#gE)" stroke="#d2d2d2" stroke-width=".7" stroke-linejoin="round"/><polygon transform="translate(57,0)" points="9.00,1.40 11.53,6.62 17.27,7.41 13.09,11.43 14.11,17.14 9.00,14.40 3.89,17.14 4.91,11.43 0.73,7.41 6.47,6.62" fill="url(#gE)" stroke="#d2d2d2" stroke-width=".7" stroke-linejoin="round"/><polygon transform="translate(76,0)" points="9.00,1.40 11.53,6.62 17.27,7.41 13.09,11.43 14.11,17.14 9.00,14.40 3.89,17.14 4.91,11.43 0.73,7.41 6.47,6.62" fill="url(#gE)" stroke="#d2d2d2" stroke-width=".7" stroke-linejoin="round"/><g clip-path="url(#c20)"><polygon transform="translate(0,0)" points="9.00,1.40 11.53,6.62 17.27,7.41 13.09,11.43 14.11,17.14 9.00,14.40 3.89,17.14 4.91,11.43 0.73,7.41 6.47,6.62" fill="url(#gF)" stroke="#eca53a" stroke-width=".7" stroke-linejoin="round"/><polygon transform="translate(19,0)" points="9.00,1.40 11.53,6.62 17.27,7.41 13.09,11.43 14.11,17.14 9.00,14.40 3.89,17.14 4.91,11.43 0.73,7.41 6.47,6.62" fill="url(#gF)" stroke="#eca53a" stroke-width=".7" stroke-linejoin="round"/><polygon transform="translate(38,0)" points="9.00,1.40 11.53,6.62 17.27,7.41 13.09,11.43 14.11,17.14 9.00,14.40 3.89,17.14 4.91,11.43 0.73,7.41 6.47,6.62" fill="url(#gF)" stroke="#eca53a" stroke-width=".7" stroke-linejoin="round"/><polygon transform="translate(57,0)" points="9.00,1.40 11.53,6.62 17.27,7.41 13.09,11.43 14.11,17.14 9.00,14.40 3.89,17.14 4.91,11.43 0.73,7.41 6.47,6.62" fill="url(#gF)" stroke="#eca53a" stroke-width=".7" stroke-linejoin="round"/><polygon transform="translate(76,0)" points="9.00,1.40 11.53,6.62 17.27,7.41 13.09,11.43 14.11,17.14 9.00,14.40 3.89,17.14 4.91,11.43 0.73,7.41 6.47,6.62" fill="url(#gF)" stroke="#eca53a" stroke-width=".7" stroke-linejoin="round"/></g><clipPath id="c20"><rect x="0" y="0" width="30.1" height="19"/></clipPath></svg>
<div class="c" style="left:1476px;font-size:12.3px">4/1/2016 11:54:41 AM</div>
</div>
</div>
<div class="abs" style="left:1617px;top:142px;width:12px;height:707px;background:#f8f8f8"></div>
<div class="abs" style="left:1618px;top:143px;width:13px;height:150px;border-radius:7px;background:linear-gradient(90deg,#c8c8c8,#a6a6a6 38%,#a6a6a6 62%,#c4c4c4);box-shadow:0 0 1px .5px rgba(190,190,190,.6)"></div>
<div id="hscroll" class="abs"></div>
<div class="abs" style="left:1515px;top:849px;width:114px;height:16px;background:#f8f8fa"></div>
<div class="abs" style="left:0;top:849px;width:1629px;height:17px;background:#f8f8f8"></div>
<div class="abs" style="left:0;top:866px;width:1629px;height:4px;background:#e4e5ee"></div>
<div class="abs" style="left:0px;top:849px;width:1514px;height:17px;border-radius:8.5px;background:linear-gradient(#cacaca,#a8a8a8 38%,#a6a6a6 62%,#c6c6c6);box-shadow:0 0 1px .5px rgba(190,190,190,.6)"></div>
<div id="hdr2" class="abs">
<div class="abs" style="left:20px;top:4px;font-size:20.6px;color:#fff;top:2.5px">Andrea Larson</div>
<div class="abs" style="left:163px;top:11px;font-size:12px;color:#fff;text-decoration:underline">Talent Pool</div>
<div class="abs" style="left:1380px;top:10px"><svg width="14" height="12" viewBox="0 0 14 12"><path d="M1 6h12M4 3L1 6l3 3M10 3l3 3-3 3" fill="none" stroke="#fff" stroke-width="1.3"/></svg></div>
<div class="abs" style="left:1402px;top:6px"><svg width="19" height="19" viewBox="0 0 19 19"><circle cx="9.5" cy="9.5" r="8" fill="none" stroke="#fff" stroke-width="1.4"/><path d="M7 7.3c0-1.5 1.1-2.5 2.5-2.5S12 5.8 12 7.2c0 1.8-2.5 2-2.5 4" fill="none" stroke="#fff" stroke-width="1.5"/><circle cx="9.5" cy="13.6" r="1" fill="#fff"/></svg></div>
<div class="abs" style="left:1427px;top:6px"><svg width="19" height="19" viewBox="0 0 20 20"><path d="M8.6 1.5h2.8l.4 2.3 1.5.7 2-1.3 2 2-1.3 2 .7 1.5 2.3.4v2.8l-2.3.4-.7 1.5 1.3 2-2 2-2-1.3-1.5.7-.4 2.3H8.6l-.4-2.3-1.5-.7-2 1.3-2-2 1.3-2-.7-1.5-2.3-.4V8.6l2.3-.4.7-1.5-1.3-2 2-2 2 1.3 1.5-.7z" fill="none" stroke="#fff" stroke-width="1.4"/><circle cx="10" cy="10" r="2.8" fill="none" stroke="#fff" stroke-width="1.4"/></svg></div>
<div class="abs" style="left:1451px;top:6px"><svg width="19" height="19" viewBox="0 0 19 19"><path d="M5.5 14H4.5A3.5 3.5 0 0 1 4.3 7 5.3 5.3 0 0 1 14.5 6 4 4 0 0 1 14.8 14H13.5" fill="none" stroke="#fff" stroke-width="1.4"/><path d="M9.5 8.5v9M7 15l2.5 2.5L12 15" fill="none" stroke="#fff" stroke-width="1.3"/></svg></div>
<div class="abs" style="left:1476px;top:6px"><svg width="19" height="19" viewBox="0 0 19 19"><g fill="none" stroke="#fff" stroke-width="1.4"><path d="M4.5 6V1.5h10V6"/><rect x="1" y="6" width="17" height="8" rx="1"/><rect x="4.5" y="11" width="10" height="6.5"/></g><circle cx="15" cy="8.5" r=".7" fill="#fff"/></svg></div>
<div class="abs" style="left:1500px;top:6px"><svg width="19" height="19" viewBox="0 0 19 19"><path d="M1.5 17.5l1-4.5L13.5 2a1.7 1.7 0 0 1 2.4 0l1.1 1.1a1.7 1.7 0 0 1 0 2.4L6 16.5z M11.8 3.8l3.4 3.4" fill="none" stroke="#fff" stroke-width="1.4" stroke-linejoin="round"/></svg></div>
<div class="abs" style="left:1525px;top:9px"><svg width="19" height="14" viewBox="0 0 19 14"><rect x="1" y="1" width="17" height="12" rx="1.2" fill="none" stroke="#fff" stroke-width="1.4"/><path d="M1.5 2l8 6.3 8-6.3" fill="none" stroke="#fff" stroke-width="1.4"/></svg></div>
<div class="abs" style="left:1554px;top:10px"><svg width="12" height="12" viewBox="0 0 12 12"><path d="M6 0.5v11M0.5 6h11" stroke="#fff" stroke-width="1.8"/></svg></div>
<div class="abs" style="left:1577px;top:10px"><svg width="14" height="12" viewBox="0 0 14 12"><g stroke="#fff" stroke-width="1.3"><path d="M0.5 1.3h13M0.5 5.5h7M0.5 10.5h13M10.8 3.5v5M9 6.8l1.8 1.8 1.8-1.8"/></g></svg></div>
</div>
<div id="tabs2" class="abs">
<div class="tab" style="left:20px;top:8px">EDIT NAME</div>
<div class="tab act" style="left:112px;top:6px">RESUME</div>
<div class="tab" style="left:187px;top:8px">ACTIVITIES</div>
<div class="tab" style="left:278px;top:8px">ATTACHMENTS</div>
<div class="tab" style="left:395px;top:8px">ROLLUP</div>
<div class="tab" style="left:467px;top:8px">PIPELINE</div>
<div class="tab" style="left:547px;top:8px">LINKED</div>
<div class="tab" style="left:615px;top:8px">KEYWORDS</div>
<div class="tab" style="left:708px;top:8px">PRESENTATIONS</div>
<div class="tab" style="left:833px;top:8px">SUMMARY</div>
<div class="abs" style="left:110px;top:23px;width:54px;height:2px;background:#185c4f"></div>
<div class="abs" style="left:922px;top:0;width:16px;height:32px;overflow:hidden"><div class="tab" style="left:0;top:8px">DETAILS</div></div>
<div class="abs" style="left:938px;top:4px;width:1px;height:25px;background:#a8d0e0"></div>
<div class="abs" style="left:942px;top:10px;width:0;height:0;border-top:3px solid transparent;border-bottom:3px solid transparent;border-left:5px solid #1a4a5a"></div>
<svg class="abs" style="left:961px;top:9px" width="14" height="12" viewBox="0 0 14 12"><g stroke="#666" stroke-width="1.2"><path d="M1 1.5h12M1 5.5h7M1 9.5h12M10.5 3.5v5M8.8 6.8l1.7 1.7 1.7-1.7"/></g></svg>
<svg class="abs" style="left:1347px;top:8px" width="16" height="16" viewBox="0 0 16 16"><path d="M10.5 4.5L5 10a1.5 1.5 0 0 0 2.1 2.1l6-6a2.8 2.8 0 0 0-4-4l-6.2 6.2a4 4 0 0 0 5.7 5.7L14 8.6" fill="none" stroke="#b8b8b8" stroke-width="1.2"/></svg>
<div class="abs" style="left:1364px;top:12px;font-size:10px;color:#aaa">0</div>
<div class="abs" style="left:1378px;top:7px;font-size:14px;color:#aaa">+</div>
<svg class="abs" style="left:1411px;top:8px" width="11" height="14" viewBox="0 0 11 14"><rect x=".6" y=".6" width="9.4" height="12.6" fill="none" stroke="#b8b8b8" stroke-width="1"/><path d="M2.5 3h2.5M2.5 5h2M2.5 7.5h6M2.5 9.5h6M2.5 11.5h6" stroke="#b8b8b8" stroke-width=".8"/></svg>
<div class="abs" style="left:1425px;top:12px;font-size:10px;color:#aaa">N/A</div>
<div class="abs" style="left:1452px;top:7px;font-size:14px;color:#aaa">+</div>
<svg class="abs" style="left:1482px;top:8px" width="14" height="14" viewBox="0 0 14 14"><path d="M7 1.5H1.5v11h11V7" fill="none" stroke="#b8b8b8" stroke-width="1.1"/><path d="M5.5 9l.4-2L11.5 1.4l1.6 1.6L7.5 8.6z" fill="none" stroke="#b8b8b8" stroke-width="1.1"/></svg>
<div class="abs" style="left:1498px;top:12px;font-size:10px;color:#aaa">0</div>
<div class="abs" style="left:1513px;top:7px;font-size:14px;color:#aaa">+</div>
<svg class="abs" style="left:1544px;top:8px" width="14" height="13" viewBox="0 0 14 13"><path d="M1 1h8v5H4.5L2.5 8V6H1z" fill="none" stroke="#b8b8b8" stroke-width="1"/><path d="M5.5 4.5h7.5v5.5h-1.5v2L9.5 10H5.5z" fill="#fafafa" stroke="#b8b8b8" stroke-width="1"/></svg>
<div class="abs" style="left:1559px;top:11px;font-size:10px;color:#aaa">&#x2713;</div>
<div class="abs" style="left:1577px;top:7px;font-size:14px;color:#aaa">+</div>
</div>
<div id="content" class="abs">
<div class="abs" style="left:15px;top:4px;width:75px;height:73px;background:#fcfcfe;border-left:3px solid #185c4f"></div>
<svg class="abs" style="left:42px;top:18px" width="24" height="33" viewBox="0 0 24 33"><rect x="1" y="1" width="22" height="31" rx="1.5" fill="#fff" stroke="#1a5c4f" stroke-width="1.6"/><circle cx="7.4" cy="6.6" r="1.6" fill="#1a5c4f"/><path d="M4.3 12.5v-2c0-1.3 1.3-2 3.1-2s3.1.7 3.1 2v2z" fill="#1a5c4f"/><path d="M12.5 9.5h7M12.5 12h7M4 16.5h15.5M4 20.5h15.5M4 24.5h15.5" stroke="#1a5c4f" stroke-width="1.1"/></svg>
<div class="abs" style="left:34px;top:57px;font-size:11px;color:#1f3f3f">Resume</div>
<svg class="abs" style="left:37px;top:98px" width="34" height="30" viewBox="0 0 34 30"><path d="M1.2 15.2C5.200 8.200 10.500 5 16.800 5S28.400 8.200 32.400 15.200C28.400 22.200 23.100 25.400 16.800 25.400S5.200 22.200 1.200 15.200z" fill="none" stroke="#ababab" stroke-width="1.9"/><circle cx="16.7" cy="14.9" r="4.6" fill="none" stroke="#ababab" stroke-width="1.9"/><path d="M5.6 1.6l23.700 26.500" stroke="#eff0f5" stroke-width="3.6"/><path d="M5.6 1.6l23.700 26.500" stroke="#ababab" stroke-width="1.5"/></svg>
<div class="abs" style="left:36px;top:137px;font-size:11px;color:#aaa">Blinded</div>
<div class="abs" style="left:102px;top:4px;width:1498px;height:35px;background:#fcfcfe"></div>
<div class="abs" style="left:107px;top:7px;width:81px;height:24px;background:#f8f8fa"></div>
<div class="abs" style="left:117px;top:13px;font-size:12px;color:#222">PDF View</div>
<div class="tri" style="left:173px;top:22px;border-top-color:#aaa"></div>
<div class="abs" style="left:102px;top:35px;width:1498px;height:32px;background:linear-gradient(#4a4a4a,#3e3e3e);border-bottom:1px solid #2f2f2f"></div>
<div class="abs" style="left:102px;top:67px;width:1498px;height:92px;background:#404040"></div>
<div class="abs" style="left:328px;top:67px;width:5px;height:92px;background:linear-gradient(90deg,rgba(0,0,0,0),rgba(0,0,0,.35))"></div>
<div class="abs" style="left:1352px;top:67px;width:5px;height:92px;background:linear-gradient(90deg,rgba(0,0,0,.35),rgba(0,0,0,0))"></div>
<div class="abs" style="left:333px;top:67px;width:1019px;height:92px;background:#fff;overflow:hidden">
<div class="abs" style="left:120px;top:-16px;font-family:'Liberation Serif',serif;font-size:20px;color:#000;white-space:nowrap">Any Bank, St. Louis, Missouri, XXXX-XXXX</div>
<div class="abs" style="left:120px;top:7.5px;font-family:'Liberation Serif',serif;font-size:20px;font-weight:bold;color:#000;white-space:nowrap">Consumer Banking Manager-Supervisor</div>
<div class="abs" style="left:120px;top:30px;font-family:'Liberation Serif',serif;font-size:20px;color:#000;white-space:nowrap">Promoted 5 times in 10 years from Teller to Consumer Banking</div>
<div class="abs" style="left:152px;top:87px;width:5px;height:5px;border-radius:3px;background:#000"></div>
<div class="abs" style="left:180px;top:78px;font-family:'Liberation Serif',serif;font-size:20px;color:#000;white-space:nowrap">Interviewed, trained, supervised, and evaluated up to 22 employees</div>
<svg class="abs" style="left:15px;top:28px" width="34" height="34" viewBox="0 0 34 34"><path d="M2.5 31.5l2-8L22.5 5.5a3 3 0 0 1 4.2 0l1.3 1.3a3 3 0 0 1 0 4.2L10 29z M4.5 23.5l6 5.5" fill="none" stroke="#cfcfcf" stroke-width="1.5" stroke-linejoin="round"/></svg>
</div>
<div class="abs" style="left:1583px;top:67px;width:17px;height:92px;background:#f1f1f1"></div>
<div class="abs" style="left:1587px;top:72px;width:0;height:0;border-left:4.5px solid transparent;border-right:4.5px solid transparent;border-bottom:5px solid #505050"></div>
<div class="abs" style="left:1585px;top:95px;width:13px;height:17px;background:#c1c1c1"></div>
<div class="abs" style="left:1587px;top:148px;width:0;height:0;border-left:4.5px solid transparent;border-right:4.5px solid transparent;border-top:5px solid #505050"></div>
<svg class="abs" style="left:114px;top:44px" width="15" height="15" viewBox="0 0 15 15"><rect x="1" y="1" width="13" height="13" fill="none" stroke="#e6e6e6" stroke-width="1.5"/><rect x="1" y="1" width="4.5" height="13" fill="#e6e6e6" opacity=".55"/></svg>
<svg class="abs" style="left:178px;top:44px" width="15" height="15" viewBox="0 0 15 15"><circle cx="9" cy="6" r="4.3" fill="none" stroke="#e6e6e6" stroke-width="1.8"/><path d="M6 9l-4.5 4.5" stroke="#e6e6e6" stroke-width="2.2"/></svg>
<svg class="abs" style="left:211px;top:43px" width="16" height="16" viewBox="0 0 16 16"><path d="M1.2 8.3L8 1l6.800 7.300H12.2C12.2 10.500 12.600 13 13.700 14.600 12.300 12.900 10.200 12.700 8 14.600 6 12.500 4.900 10.500 4.900 8.300z" fill="#e6e6e6"/></svg>
<div class="abs" style="left:234px;top:41px;width:1px;height:20px;background:#2a2a2a"></div>
<svg class="abs" style="left:242px;top:43px" width="16" height="16" viewBox="0 0 16 16"><path d="M1.2 7.7L8 15l6.800-7.300H12.2C12.2 5.500 12.600 3 13.700 1.400 12.300 3.100 10.200 3.300 8 1.400 6 3.500 4.900 5.500 4.900 7.700z" fill="#e6e6e6"/></svg>
<div class="abs" style="left:271px;top:42px;font-size:12.2px;color:#d9d9d9">Page:</div>
<div class="abs" style="left:311px;top:40px;width:54px;height:21px;background:#4c4c4c;border:1px solid #2e2e2e;border-radius:2px"></div>
<div class="abs" style="left:352px;top:42px;font-size:13px;color:#e6e6e6">1</div>
<div class="abs" style="left:368px;top:42px;font-size:12.5px;color:#d9d9d9">of 2</div>
<div class="abs" style="left:769px;top:50px;width:10px;height:2px;background:#e6e6e6"></div>
<div class="abs" style="left:789px;top:43px;width:1px;height:16px;background:#2a2a2a"></div>
<svg class="abs" style="left:799px;top:45px" width="12" height="12" viewBox="0 0 12 12"><path d="M6 0.5v11M0.5 6h11" stroke="#e6e6e6" stroke-width="2"/></svg>
<div class="abs" style="left:823px;top:38px;width:123px;height:23px;background:#474747;border:1px solid #2e2e2e;border-radius:2px"></div>
<div class="abs" style="left:830px;top:42px;font-size:12px;color:#e6e6e6">Automatic Zoom</div>
<svg class="abs" style="left:933px;top:44px" width="7" height="12" viewBox="0 0 7 12"><path d="M3.5 1L6.5 4.5h-6zM3.5 11L6.5 7.5h-6z" fill="#e6e6e6"/></svg>
<svg class="abs" style="left:1395px;top:44px" width="16" height="16" viewBox="0 0 16 16"><g fill="#e6e6e6"><path d="M1 1h5l-1.7 1.7 2.5 2.5-1.1 1.1-2.5-2.5L1.5 6z"/><path d="M15 1v5l-1.7-1.7-2.5 2.5-1.1-1.1 2.5-2.5L10.5 1z"/><path d="M1 15v-5l1.7 1.7 2.5-2.5 1.1 1.1-2.5 2.5L5.5 15z"/><path d="M15 15h-5l1.7-1.7-2.5-2.5 1.1-1.1 2.5 2.5L14.5 10z"/></g></svg>
<svg class="abs" style="left:1535px;top:44px" width="9" height="15" viewBox="0 0 9 15"><path d="M0.5 0.5h8v14L4.5 10.5 0.5 14.5z" fill="#e6e6e6"/></svg>
<div class="abs" style="left:1559px;top:41px;width:1px;height:20px;background:#2a2a2a"></div>
<svg class="abs" style="left:1573px;top:45px" width="14" height="12" viewBox="0 0 14 12"><path d="M1 1l5 5-5 5M7 1l5 5-5 5" fill="none" stroke="#e6e6e6" stroke-width="2.2"/></svg>
<div class="abs" style="left:1605px;top:151px;width:12px;height:22px;background:#fafafb"></div>
<div class="abs" style="left:1605px;top:2px;width:12px;height:149px;border-radius:6px;background:linear-gradient(90deg,#c8c8c8,#a6a6a6 38%,#a6a6a6 62%,#c4c4c4);box-shadow:0 0 1px .5px rgba(190,190,190,.6)"></div>
</div>
</body></html>
